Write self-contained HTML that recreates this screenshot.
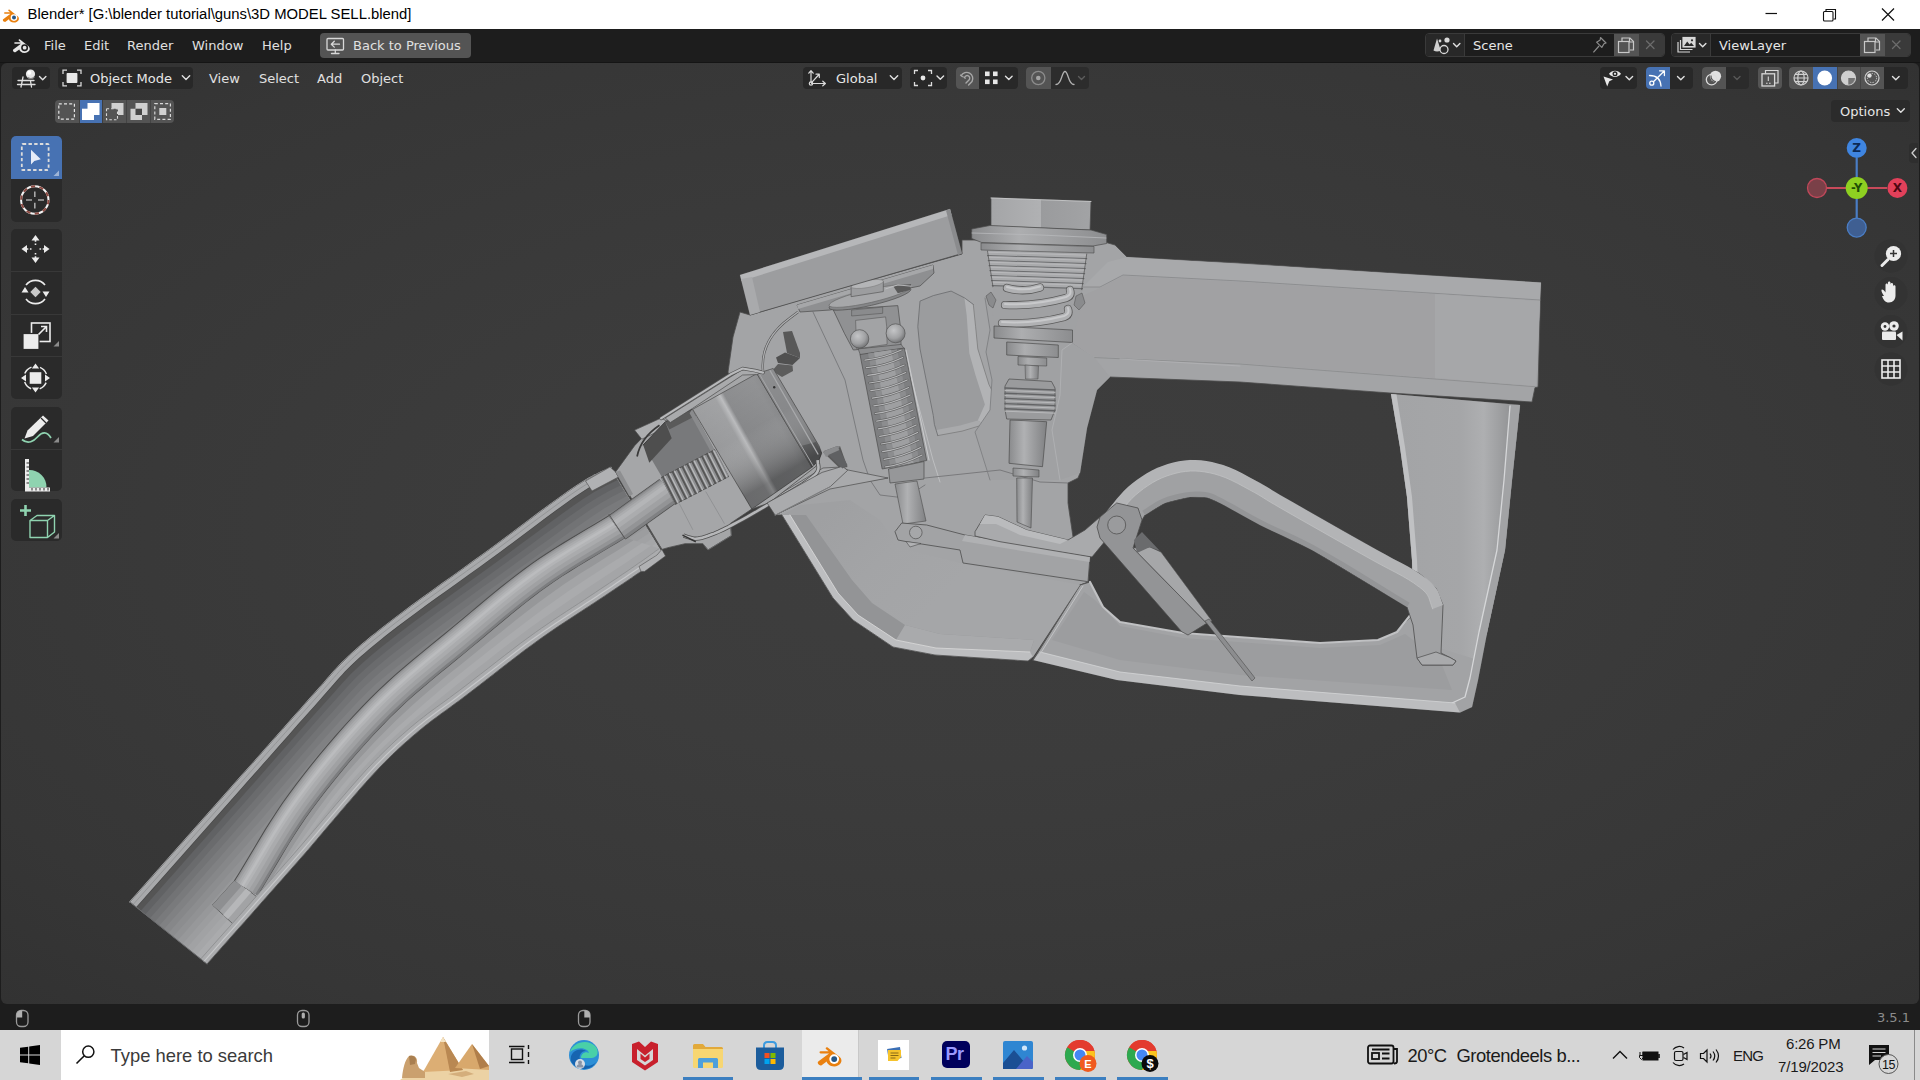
<!DOCTYPE html>
<html lang="en">
<head>
<meta charset="utf-8">
<title>Blender</title>
<style>
*{box-sizing:border-box;margin:0;padding:0}
html,body{width:1920px;height:1080px;overflow:hidden;background:#1d1d1d}
body{position:relative;font-family:"DejaVu Sans","Liberation Sans",sans-serif;font-size:13px;color:#e6e6e6}
.abs{position:absolute}
.t{position:absolute;white-space:nowrap;line-height:1}
#titlebar{position:absolute;left:0;top:0;width:1920px;height:29px;background:#fff;color:#000;font-family:"Liberation Sans",sans-serif}
#topbar{position:absolute;left:0;top:29px;width:1920px;height:33px;background:#1d1d1d}
#tbline{position:absolute;left:0;top:61.500px;width:1920px;height:1.500px;background:#151515}
#viewport{position:absolute;left:1px;top:63px;width:1918px;height:941px;border-radius:6px;overflow:hidden;
 background:radial-gradient(ellipse farthest-corner at 50% 50%, #3e3e3e 0%, #3c3c3c 35%, #393939 60%, #363636 82%, #323232 100%)}
#statusbar{position:absolute;left:0;top:1005px;width:1920px;height:25px;background:#1d1d1d}
#taskbar{position:absolute;left:0;top:1030px;width:1920px;height:50px;background:#d6d6d6;font-family:"Liberation Sans",sans-serif;color:#000}
.btn{position:absolute;background:#282828;border-radius:4px}
.btn2{position:absolute;background:#545454}
.blue{background:#4772b3}
.menu{color:#e0e0e0}
svg{position:absolute;overflow:visible}
</style>
</head>
<body>
<div id="titlebar">
  <svg style="left:1px;top:8px" width="21" height="15" viewBox="0 0 21 15">
    <path d="M2.200 11.300L9.500 5.800H3.800C2.800 5.800 2.800 4.300 3.800 4.300H9.200L7.600 3C6.700 2.200 7.700 1.100 8.600 1.800L16.800 8.200C19.600 11 16.800 14.600 13 14.600 10 14.600 8.300 12.900 7.900 11.300L4.500 13.800C3.200 14.700 1 12.200 2.200 11.300Z" fill="#e9800f"/>
    <circle cx="13" cy="9.600" r="3.300" fill="#fff"/><circle cx="13" cy="9.600" r="2" fill="#265787"/>
  </svg>
  <div class="t" style="left:27.500px;top:7.300px;font-size:14.850px">Blender* [G:\blender tutorial\guns\3D MODEL SELL.blend]</div>
  <svg style="left:1750px;top:0" width="170" height="29" viewBox="1750 0 170 29">
    <path d="M1765.500 13.500H1777" stroke="#111" stroke-width="1.200"/>
    <path d="M1826 11.500V9.500H1835.500V19H1833.500" stroke="#111" stroke-width="1.100" fill="none"/><rect x="1823.500" y="11.500" width="9.500" height="9.500" rx="1" fill="none" stroke="#111" stroke-width="1.100"/>
    <path d="M1882 8.500L1894 20.500M1894 8.500L1882 20.500" stroke="#111" stroke-width="1.200"/>
  </svg>
</div>
<div id="topbar">
  <svg style="left:11px;top:7px" width="22" height="19" viewBox="0 0 21 15">
    <path d="M2.200 11.300L9.500 5.800H3.800C2.800 5.800 2.800 4.300 3.800 4.300H9.200L7.600 3C6.700 2.200 7.700 1.100 8.600 1.800L16.800 8.200C19.600 11 16.800 14.600 13 14.600 10 14.600 8.300 12.900 7.900 11.300L4.500 13.800C3.200 14.700 1 12.200 2.200 11.300Z" fill="#e6e6e6"/>
    <circle cx="13" cy="9.600" r="3.300" fill="#1d1d1d"/><circle cx="13" cy="9.600" r="1.800" fill="#e6e6e6"/>
  </svg>
  <div class="t menu" style="left:44px;top:9.500px">File</div>
  <div class="t menu" style="left:84px;top:9.500px">Edit</div>
  <div class="t menu" style="left:127px;top:9.500px">Render</div>
  <div class="t menu" style="left:192px;top:9.500px">Window</div>
  <div class="t menu" style="left:262px;top:9.500px">Help</div>
  <div class="btn2" style="left:320px;top:4px;width:151px;height:25px;border-radius:4px"></div>
  <svg style="left:326px;top:8px" width="19" height="18" viewBox="0 0 19 18"><g stroke="#d8d8d8" stroke-width="1.300" fill="none" stroke-linecap="round" stroke-linejoin="round"><rect x="1" y="1.500" width="16.500" height="11.500" rx="1"/><path d="M9.300 13V16M5.500 16.500H13M13.500 7.200H5.500M8.300 4.300L5.300 7.200 8.300 10.100"/></g></svg>
  <div class="t menu" style="left:353px;top:9.500px">Back to Previous</div>
</div>
<div id="tbline"></div>
<div id="viewport"></div>
<div id="statusbar">
  <div class="t" style="right:10px;top:6px;color:#8c8c8c">3.5.1</div>
</div>
<svg id="model" width="1920" height="1080" viewBox="0 0 1920 1080" style="left:0;top:0">
<defs>
<linearGradient id="gTubeIn" gradientUnits="userSpaceOnUse" x1="300" y1="700" x2="345" y2="745"><stop offset="0" stop-color="#4f4f4f"/><stop offset="1" stop-color="#8c8d8f"/></linearGradient>
<linearGradient id="gGrip" gradientUnits="userSpaceOnUse" x1="1395" y1="0" x2="1515" y2="0"><stop offset="0" stop-color="#a3a4a6"/><stop offset="0.55" stop-color="#a5a6a8"/><stop offset="0.74" stop-color="#aeafb1"/><stop offset="0.84" stop-color="#a2a3a5"/><stop offset="1" stop-color="#8e8f91"/></linearGradient>
<linearGradient id="gCyl" gradientUnits="userSpaceOnUse" x1="693" y1="409" x2="790" y2="355"><stop offset="0" stop-color="#969799"/><stop offset="0.22" stop-color="#9b9c9e"/><stop offset="0.27" stop-color="#b8b9bb"/><stop offset="0.31" stop-color="#848587"/><stop offset="0.6" stop-color="#8a8b8d"/><stop offset="0.75" stop-color="#808183"/><stop offset="1" stop-color="#78797b"/></linearGradient>
<linearGradient id="gCylV" gradientUnits="userSpaceOnUse" x1="740" y1="385" x2="790" y2="470"><stop offset="0" stop-color="#fff" stop-opacity="0.07"/><stop offset="0.45" stop-color="#fff" stop-opacity="0.02"/><stop offset="1" stop-color="#000" stop-opacity="0.30"/></linearGradient>
<linearGradient id="gBowl" gradientUnits="userSpaceOnUse" x1="800" y1="540" x2="900" y2="640"><stop offset="0" stop-color="#9fa0a2"/><stop offset="0.5" stop-color="#a3a4a6"/><stop offset="1" stop-color="#a5a6a8"/></linearGradient>
<linearGradient id="gRodV" gradientUnits="objectBoundingBox" x1="0" y1="0" x2="1" y2="0"><stop offset="0" stop-color="#8a8b8d"/><stop offset="0.4" stop-color="#b0b1b3"/><stop offset="1" stop-color="#808183"/></linearGradient>
<linearGradient id="gHex" gradientUnits="objectBoundingBox" x1="0" y1="0" x2="1" y2="0"><stop offset="0" stop-color="#a4a5a7"/><stop offset="0.5" stop-color="#b0b1b3"/><stop offset="0.505" stop-color="#9a9b9d"/><stop offset="1" stop-color="#a2a3a5"/></linearGradient>
<linearGradient id="gFl" gradientUnits="objectBoundingBox" x1="0" y1="0" x2="1" y2="0"><stop offset="0" stop-color="#8a8b8d"/><stop offset="0.35" stop-color="#adaeb0"/><stop offset="1" stop-color="#8c8d8f"/></linearGradient>
<radialGradient id="gBall" cx="0.4" cy="0.35" r="0.7"><stop offset="0" stop-color="#c4c5c7"/><stop offset="0.6" stop-color="#a0a1a3"/><stop offset="1" stop-color="#6e6f71"/></radialGradient>
</defs>
<polygon points="750.0,315.0 740.0,312.0 733.0,337.0 728.0,372.0 740.0,420.0 768.0,500.0 775.0,515.0 782.0,515.0 833.0,598.0 853.0,620.0 893.0,647.0 935.0,655.0 1028.0,661.0 1033.0,657.0 1080.0,585.0 1088.0,582.0 1090.0,557.0 1073.0,537.0 1068.0,503.0 1068.0,483.0 1078.0,478.0 1080.0,473.0 1087.0,428.0 1097.0,390.0 1110.0,377.0 1240.0,382.0 1390.0,393.0 1532.0,402.0 1535.0,387.5 1538.0,387.0 1541.0,282.5 1240.0,263.0 1127.0,257.0 1115.0,245.0 1108.0,243.0 1090.0,236.0 985.0,240.0 962.0,240.0 962.0,254.0 800.0,300.0" fill="#a3a4a6" stroke="#4c4c4c" stroke-width="0.8" stroke-linejoin="round" />
<polygon points="1127.0,257.0 1541.0,282.5 1540.0,300.0 1240.0,281.0 1123.0,275.0 1100.0,287.0 1083.0,287.0 1108.0,262.0" fill="#a8a9ab" />
<polyline points="1083.0,287.0 1100.0,287.0 1123.0,275.0 1240.0,281.0 1540.0,300.0" fill="none" stroke="#8a8b8d" stroke-width="0.9" stroke-linecap="round" stroke-linejoin="round" />
<polyline points="1072.0,343.0 1093.0,357.5 1240.0,364.0 1535.0,386.7" fill="none" stroke="#8c8d8f" stroke-width="0.9" stroke-linecap="round" stroke-linejoin="round" />
<polyline points="1120.0,359.0 1240.0,366.0" fill="none" stroke="#b4b5b7" stroke-width="0.7" stroke-linecap="round" stroke-linejoin="round" />
<polygon points="1123.0,276.0 1240.0,282.0 1540.0,301.0 1536.0,386.0 1240.0,363.0 1094.0,356.5 1073.0,343.0 1073.0,300.0 1100.0,288.0" fill="#a1a1a3" />
<polygon points="1435.0,294.0 1540.0,301.0 1536.0,386.0 1435.0,378.0" fill="#a6a7a9" />
<polygon points="1391.0,394.0 1400.0,447.0 1407.0,497.0 1412.0,560.0 1414.0,613.0 1397.0,632.0 1378.0,640.0 1320.0,643.0 1183.0,633.0 1120.0,622.0 1103.0,607.0 1090.0,582.0 1080.0,585.0 1033.0,660.0 1117.0,680.0 1240.0,695.0 1460.0,712.5 1472.0,707.0 1478.0,680.0 1487.0,633.0 1505.0,550.0 1512.0,480.0 1520.0,405.0 1391.0,394.0" fill="#a2a3a5" stroke="#4c4c4c" stroke-width="0.8" stroke-linejoin="round" />
<polygon points="1391.0,394.0 1400.0,447.0 1407.0,497.0 1412.0,560.0 1414.0,640.0 1478.0,660.0 1487.0,633.0 1505.0,550.0 1512.0,480.0 1520.0,405.0" fill="url(#gGrip)" />
<polygon points="1391.0,394.0 1400.0,447.0 1407.0,497.0 1412.0,560.0 1414.0,613.0 1419.0,613.0 1417.0,560.0 1412.0,497.0 1405.0,447.0 1396.5,394.5" fill="#c0c1c3" />
<polygon points="1510.0,405.0 1520.0,405.0 1512.0,480.0 1505.0,550.0 1487.0,633.0 1478.0,680.0 1472.0,707.0 1460.0,712.5 1455.0,704.0 1465.0,697.0 1470.0,678.0 1479.0,632.0 1497.0,550.0 1504.0,480.0" fill="#a2a3a5" />
<polyline points="1510.0,406.0 1504.0,480.0 1497.0,550.0 1479.0,632.0 1470.0,678.0 1465.0,697.0 1452.0,703.0" fill="none" stroke="#d6d7d9" stroke-width="1.3" stroke-linecap="round" stroke-linejoin="round" />
<polygon points="1033.0,660.0 1117.0,680.0 1240.0,695.0 1460.0,712.5 1455.0,703.0 1240.0,686.0 1120.0,672.0 1040.0,652.0" fill="#bcbdbf" />
<polyline points="1040.0,652.0 1120.0,672.0 1240.0,686.0 1455.0,703.0" fill="none" stroke="#d4d5d7" stroke-width="0.8" stroke-linecap="round" stroke-linejoin="round" />
<polyline points="1090.0,582.0 1103.0,607.0 1120.0,622.0 1183.0,633.0 1320.0,643.0 1378.0,640.0 1397.0,632.0 1412.0,613.0" fill="none" stroke="#c0c1c3" stroke-width="2.2" stroke-linecap="round" stroke-linejoin="round" />
<polygon points="1095.0,600.0 1120.0,626.0 1183.0,638.0 1320.0,648.0 1380.0,645.0 1405.0,634.0 1440.0,660.0 1452.0,690.0 1240.0,675.0 1120.0,660.0 1052.0,640.0 1084.0,592.0" fill="#9c9d9f" />
<polyline points="1080.0,585.0 1033.0,660.0" fill="none" stroke="#5a5a5a" stroke-width="1.2" stroke-linecap="round" stroke-linejoin="round" />
<polyline points="1083.0,586.0 1037.0,659.0" fill="none" stroke="#c2c3c5" stroke-width="1.0" stroke-linecap="round" stroke-linejoin="round" />
<polygon points="920.0,301.1 933.3,295.6 951.1,291.1 964.4,297.8 973.3,304.4 975.6,326.7 977.8,348.9 988.9,384.4 997.8,402.2 993.3,415.6 984.4,424.4 962.2,431.1 937.8,435.6 934.4,424.4 933.3,415.6 924.4,371.1 920.0,348.9 917.8,326.7" fill="#9b9c9e" />
<polygon points="964.4,297.8 973.3,304.4 975.6,326.7 977.8,348.9 988.9,384.4 997.8,402.2 993.3,415.6 984.4,424.4 977.8,420.4 984.9,404.4 975.6,375.6 969.3,353.3 966.7,315.6" fill="#b2b3b5" />
<polygon points="937.8,435.6 962.2,431.1 984.4,424.4 977.8,420.4 960.0,425.6 936.0,430.0" fill="#a9aaac" />
<polyline points="937.8,435.6 934.4,424.4 933.3,415.6 924.4,371.1 920.0,348.9 917.8,326.7 920.0,301.1 933.3,295.6 951.1,291.1 964.4,297.8 973.3,304.4" fill="none" stroke="#6a6b6d" stroke-width="0.8" stroke-linecap="round" stroke-linejoin="round" />
<polyline points="973.3,304.4 975.6,326.7 977.8,348.9 988.9,384.4 997.8,402.2 993.3,415.6 984.4,424.4 962.2,431.1 937.8,435.6" fill="none" stroke="#777" stroke-width="0.7" stroke-linecap="round" stroke-linejoin="round" />
<polygon points="985.0,298.0 1000.0,290.0 1083.0,287.0 1072.0,343.0 1094.0,357.0 1110.0,377.0 1097.0,390.0 1087.0,428.0 1080.0,473.0 1060.0,480.0 990.0,480.0 975.0,432.0 990.0,410.0 992.0,380.0 986.0,352.0 990.0,330.0" fill="#a0a1a3" />
<polygon points="782.0,515.0 833.0,598.0 853.0,620.0 893.0,647.0 935.0,655.0 1028.0,661.0 1033.0,657.0 1080.0,585.0 1000.0,570.0 960.0,563.0 900.0,548.0 880.0,520.0 850.0,500.0 800.0,505.0" fill="url(#gBowl)" />
<polygon points="790.0,515.0 838.0,593.0 858.0,615.0 896.0,640.0 936.0,648.0 1030.0,652.0 1034.0,640.0 940.0,634.0 905.0,625.0 872.0,603.0 852.0,580.0 806.0,515.0" fill="#939496" />
<polygon points="905.0,625.0 940.0,634.0 1034.0,640.0 1030.0,652.0 936.0,648.0 896.0,640.0" fill="#a9aaac" />
<polygon points="782.0,515.0 833.0,598.0 853.0,620.0 893.0,647.0 935.0,655.0 1028.0,661.0 1033.0,657.0 1030.0,652.0 936.0,648.0 896.0,640.0 858.0,615.0 838.0,593.0 790.0,515.0" fill="#bdbec0" />
<polyline points="790.0,515.0 838.0,593.0 858.0,615.0 896.0,640.0 936.0,648.0 1030.0,652.0" fill="none" stroke="#dadada" stroke-width="0.8" stroke-linecap="round" stroke-linejoin="round" />
<polyline points="782.0,515.0 833.0,598.0 853.0,620.0 893.0,647.0 935.0,655.0 1028.0,661.0 1033.0,657.0" fill="none" stroke="#4c4c4c" stroke-width="0.8" stroke-linecap="round" stroke-linejoin="round" />
<polyline points="813.0,312.0 845.0,380.0 863.0,460.0 870.0,480.0" fill="none" stroke="#707173" stroke-width="0.8" stroke-linecap="round" stroke-linejoin="round" />
<polyline points="905.0,355.0 933.0,460.0 940.0,482.0" fill="none" stroke="#c0c1c3" stroke-width="0.9" stroke-linecap="round" stroke-linejoin="round" />
<polyline points="775.0,515.0 830.0,487.0 888.0,478.0" fill="none" stroke="#6e6f71" stroke-width="0.8" stroke-linecap="round" stroke-linejoin="round" />
<polyline points="870.0,480.0 880.0,495.0 905.0,498.0 925.0,485.0" fill="none" stroke="#6e6f71" stroke-width="0.8" stroke-linecap="round" stroke-linejoin="round" />
<polyline points="925.0,478.0 1000.0,470.0 1040.0,482.0 1068.0,483.0" fill="none" stroke="#6e6f71" stroke-width="0.8" stroke-linecap="round" stroke-linejoin="round" />
<polygon points="768.0,501.0 823.0,468.0 841.0,467.0 848.0,470.0 888.0,478.0 830.0,489.0 775.0,515.0" fill="#a9aaac" stroke="#4c4c4c" stroke-width="0.7" stroke-linejoin="round" />
<polygon points="783.0,332.0 792.0,331.0 800.0,353.0 800.0,358.0 787.0,353.0" fill="#585858" />
<polygon points="776.0,357.5 785.0,352.5 800.0,358.0 792.5,365.0 778.0,363.0" fill="#505050" />
<polygon points="772.0,371.0 778.0,364.0 792.5,365.5 793.0,371.0 782.0,377.0" fill="#5c5c5c" />
<polygon points="823.0,452.0 840.0,446.0 847.5,467.0 840.0,468.5" fill="#5a5a5a" />
<polygon points="823.0,452.0 840.0,446.0 838.0,450.0 826.0,457.0" fill="#8a8b8d" />
<polygon points="797.0,305.0 933.0,265.0 934.0,273.0 920.0,286.0 905.0,289.0 880.0,300.0 830.0,310.0 800.0,312.0" fill="#8e8f91" stroke="#4c4c4c" stroke-width="0.7" stroke-linejoin="round" />
<polygon points="797.0,305.0 933.0,265.0 933.0,269.0 798.0,309.0" fill="#a6a7a9" />
<polygon points="833.3,310.0 897.8,305.6 900.4,326.7 901.1,345.6 853.3,350.0 844.4,333.3" fill="#909193" stroke="#4c4c4c" stroke-width="0.7" stroke-linejoin="round" />
<polygon points="855.6,320.4 885.6,316.9 886.7,326.7 887.1,344.4 856.7,348.9" fill="#a2a3a5" stroke="#4c4c4c" stroke-width="0.5" stroke-linejoin="round" />
<polygon points="851.6,310.0 882.7,307.1 882.7,313.3 851.6,316.0" fill="#8a8b8d" stroke="#4c4c4c" stroke-width="0.5" stroke-linejoin="round" />
<ellipse cx="870" cy="298.500" rx="42" ry="7" transform="rotate(-13 870 298.500)" fill="#858688" stroke="#555" stroke-width="0.700"/>
<ellipse cx="870" cy="296" rx="42" ry="6.500" transform="rotate(-13 870 296)" fill="#a6a7a9" stroke="#666" stroke-width="0.600"/>
<polygon points="851.1,286.7 883.3,281.1 883.3,291.6 851.1,296.7" fill="#9c9d9f" stroke="#4c4c4c" stroke-width="0.6" stroke-linejoin="round" />
<ellipse cx="867.300" cy="284" rx="16.300" ry="3.600" transform="rotate(-10 867.300 284)" fill="#b4b5b7" stroke="#777" stroke-width="0.500"/>
<polygon points="893.3,286.2 911.1,284.0 910.0,290.0 897.8,293.3" fill="#5a5a5a" />
<polyline points="885.6,288.9 897.8,284.9 911.1,286.2" fill="none" stroke="#c0c1c3" stroke-width="0.9" stroke-linecap="round" stroke-linejoin="round" />
<circle cx="859.6" cy="338.9" r="9.2" fill="url(#gBall)" stroke="#555" stroke-width="0.7"/>
<circle cx="895.6" cy="333.3" r="9.5" fill="url(#gBall)" stroke="#555" stroke-width="0.7"/>
<polygon points="858.2,348.9 901.1,344.4 904.0,348.4 860.4,355.1" fill="#8c8d8f" stroke="#4c4c4c" stroke-width="0.6" stroke-linejoin="round" />
<polygon points="860.0,354.5 904.4,348.0 926.7,460.5 882.2,469.0" fill="#7e7f81" stroke="#4c4c4c" stroke-width="0.7" stroke-linejoin="round" />
<polygon points="868.0,353.5 897.0,349.3 919.5,461.5 890.5,467.5" fill="#8c8d8f" />
<polygon points="874.0,352.5 891.0,350.0 913.5,462.8 896.5,466.3" fill="#9e9fa1" />
<path d="M864.9 360.1 Q883.1 358.4 901.3 350.0" fill="none" stroke="#5e5e5e" stroke-width="2.4" stroke-linecap="round"/>
<path d="M864.9 360.1 Q883.1 358.4 901.3 350.0" fill="none" stroke="#b6b7b9" stroke-width="1.2" stroke-linecap="round"/>
<path d="M866.4 367.7 Q884.6 366.0 902.8 357.5" fill="none" stroke="#5e5e5e" stroke-width="2.4" stroke-linecap="round"/>
<path d="M866.4 367.7 Q884.6 366.0 902.8 357.5" fill="none" stroke="#b6b7b9" stroke-width="1.2" stroke-linecap="round"/>
<path d="M867.8 375.3 Q886.1 373.5 904.3 365.0" fill="none" stroke="#5e5e5e" stroke-width="2.4" stroke-linecap="round"/>
<path d="M867.8 375.3 Q886.1 373.5 904.3 365.0" fill="none" stroke="#b6b7b9" stroke-width="1.2" stroke-linecap="round"/>
<path d="M869.3 383.0 Q887.5 381.1 905.8 372.5" fill="none" stroke="#5e5e5e" stroke-width="2.4" stroke-linecap="round"/>
<path d="M869.3 383.0 Q887.5 381.1 905.8 372.5" fill="none" stroke="#b6b7b9" stroke-width="1.2" stroke-linecap="round"/>
<path d="M870.8 390.6 Q889.0 388.7 907.2 380.0" fill="none" stroke="#5e5e5e" stroke-width="2.4" stroke-linecap="round"/>
<path d="M870.8 390.6 Q889.0 388.7 907.2 380.0" fill="none" stroke="#b6b7b9" stroke-width="1.2" stroke-linecap="round"/>
<path d="M872.3 398.2 Q890.5 396.2 908.7 387.5" fill="none" stroke="#5e5e5e" stroke-width="2.4" stroke-linecap="round"/>
<path d="M872.3 398.2 Q890.5 396.2 908.7 387.5" fill="none" stroke="#b6b7b9" stroke-width="1.2" stroke-linecap="round"/>
<path d="M873.8 405.9 Q892.0 403.8 910.2 395.0" fill="none" stroke="#5e5e5e" stroke-width="2.4" stroke-linecap="round"/>
<path d="M873.8 405.9 Q892.0 403.8 910.2 395.0" fill="none" stroke="#b6b7b9" stroke-width="1.2" stroke-linecap="round"/>
<path d="M875.2 413.5 Q893.5 411.4 911.7 402.5" fill="none" stroke="#5e5e5e" stroke-width="2.4" stroke-linecap="round"/>
<path d="M875.2 413.5 Q893.5 411.4 911.7 402.5" fill="none" stroke="#b6b7b9" stroke-width="1.2" stroke-linecap="round"/>
<path d="M876.7 421.1 Q895.0 418.9 913.2 410.0" fill="none" stroke="#5e5e5e" stroke-width="2.4" stroke-linecap="round"/>
<path d="M876.7 421.1 Q895.0 418.9 913.2 410.0" fill="none" stroke="#b6b7b9" stroke-width="1.2" stroke-linecap="round"/>
<path d="M878.2 428.8 Q896.4 426.5 914.7 417.5" fill="none" stroke="#5e5e5e" stroke-width="2.4" stroke-linecap="round"/>
<path d="M878.2 428.8 Q896.4 426.5 914.7 417.5" fill="none" stroke="#b6b7b9" stroke-width="1.2" stroke-linecap="round"/>
<path d="M879.7 436.4 Q897.9 434.1 916.2 425.0" fill="none" stroke="#5e5e5e" stroke-width="2.4" stroke-linecap="round"/>
<path d="M879.7 436.4 Q897.9 434.1 916.2 425.0" fill="none" stroke="#b6b7b9" stroke-width="1.2" stroke-linecap="round"/>
<path d="M881.2 444.0 Q899.4 441.6 917.6 432.5" fill="none" stroke="#5e5e5e" stroke-width="2.4" stroke-linecap="round"/>
<path d="M881.2 444.0 Q899.4 441.6 917.6 432.5" fill="none" stroke="#b6b7b9" stroke-width="1.2" stroke-linecap="round"/>
<path d="M882.6 451.7 Q900.9 449.2 919.1 440.0" fill="none" stroke="#5e5e5e" stroke-width="2.4" stroke-linecap="round"/>
<path d="M882.6 451.7 Q900.9 449.2 919.1 440.0" fill="none" stroke="#b6b7b9" stroke-width="1.2" stroke-linecap="round"/>
<path d="M884.1 459.3 Q902.4 456.8 920.6 447.5" fill="none" stroke="#5e5e5e" stroke-width="2.4" stroke-linecap="round"/>
<path d="M884.1 459.3 Q902.4 456.8 920.6 447.5" fill="none" stroke="#b6b7b9" stroke-width="1.2" stroke-linecap="round"/>
<path d="M885.6 466.9 Q903.9 464.3 922.1 455.0" fill="none" stroke="#5e5e5e" stroke-width="2.4" stroke-linecap="round"/>
<path d="M885.6 466.9 Q903.9 464.3 922.1 455.0" fill="none" stroke="#b6b7b9" stroke-width="1.2" stroke-linecap="round"/>
<polyline points="906.0,350.0 929.0,460.0" fill="none" stroke="#cacbcd" stroke-width="1.1" stroke-linecap="round" stroke-linejoin="round" />
<polygon points="888.5,469.0 924.0,461.5 924.0,479.0 890.0,483.0" fill="#969799" stroke="#4c4c4c" stroke-width="0.7" stroke-linejoin="round" />
<polygon points="895.0,484.0 917.0,481.0 926.0,521.0 903.0,524.0" fill="url(#gRodV)" stroke="#4c4c4c" stroke-width="0.6" stroke-linejoin="round" />
<polygon points="991.0,197.5 1091.0,201.0 1090.0,230.0 991.0,226.0" fill="url(#gHex)" stroke="#4c4c4c" stroke-width="0.7" stroke-linejoin="round" />
<polyline points="991.0,198.0 1091.0,201.5" fill="none" stroke="#c8c9cb" stroke-width="0.9" stroke-linecap="round" stroke-linejoin="round" />
<polygon points="971.7,229.0 990.0,225.5 1091.0,230.0 1106.7,234.5 1106.7,243.5 1093.0,246.0 981.7,242.5 971.7,238.5" fill="url(#gFl)" stroke="#4c4c4c" stroke-width="0.7" stroke-linejoin="round" />
<polyline points="972.0,233.0 1040.0,235.0 1106.0,238.0" fill="none" stroke="#b8b9bb" stroke-width="0.8" stroke-linecap="round" stroke-linejoin="round" />
<polygon points="981.0,243.0 1094.0,246.5 1094.0,253.0 981.0,250.0" fill="url(#gFl)" stroke="#4c4c4c" stroke-width="0.6" stroke-linejoin="round" />
<polygon points="987.5,251.0 1086.7,254.0 1086.7,259.0 987.5,256.0" fill="#a9aaac" />
<polyline points="987.5,255.6 1086.7,258.6" fill="none" stroke="#6c6d6f" stroke-width="1.2" stroke-linecap="round" stroke-linejoin="round" />
<polyline points="987.5,252.2 1086.7,255.2" fill="none" stroke="#bcbdbf" stroke-width="0.8" stroke-linecap="round" stroke-linejoin="round" />
<polygon points="988.3,256.0 1086.0,259.0 1086.0,264.0 988.3,261.0" fill="#a9aaac" />
<polyline points="988.3,260.6 1086.0,263.6" fill="none" stroke="#6c6d6f" stroke-width="1.2" stroke-linecap="round" stroke-linejoin="round" />
<polyline points="988.3,257.2 1086.0,260.2" fill="none" stroke="#bcbdbf" stroke-width="0.8" stroke-linecap="round" stroke-linejoin="round" />
<polygon points="989.1,261.0 1085.3,264.0 1085.3,269.0 989.1,266.0" fill="#a9aaac" />
<polyline points="989.1,265.6 1085.3,268.6" fill="none" stroke="#6c6d6f" stroke-width="1.2" stroke-linecap="round" stroke-linejoin="round" />
<polyline points="989.1,262.2 1085.3,265.2" fill="none" stroke="#bcbdbf" stroke-width="0.8" stroke-linecap="round" stroke-linejoin="round" />
<polygon points="989.9,266.0 1084.6,269.0 1084.6,274.0 989.9,271.0" fill="#a9aaac" />
<polyline points="989.9,270.6 1084.6,273.6" fill="none" stroke="#6c6d6f" stroke-width="1.2" stroke-linecap="round" stroke-linejoin="round" />
<polyline points="989.9,267.2 1084.6,270.2" fill="none" stroke="#bcbdbf" stroke-width="0.8" stroke-linecap="round" stroke-linejoin="round" />
<polygon points="990.7,271.0 1083.9,274.0 1083.9,279.0 990.7,276.0" fill="#a9aaac" />
<polyline points="990.7,275.6 1083.9,278.6" fill="none" stroke="#6c6d6f" stroke-width="1.2" stroke-linecap="round" stroke-linejoin="round" />
<polyline points="990.7,272.2 1083.9,275.2" fill="none" stroke="#bcbdbf" stroke-width="0.8" stroke-linecap="round" stroke-linejoin="round" />
<polygon points="991.5,276.0 1083.2,279.0 1083.2,284.0 991.5,281.0" fill="#a9aaac" />
<polyline points="991.5,280.6 1083.2,283.6" fill="none" stroke="#6c6d6f" stroke-width="1.2" stroke-linecap="round" stroke-linejoin="round" />
<polyline points="991.5,277.2 1083.2,280.2" fill="none" stroke="#bcbdbf" stroke-width="0.8" stroke-linecap="round" stroke-linejoin="round" />
<polygon points="992.3,281.0 1082.5,284.0 1082.5,289.0 992.3,286.0" fill="#a9aaac" />
<polyline points="992.3,285.6 1082.5,288.6" fill="none" stroke="#6c6d6f" stroke-width="1.2" stroke-linecap="round" stroke-linejoin="round" />
<polyline points="992.3,282.2 1082.5,285.2" fill="none" stroke="#bcbdbf" stroke-width="0.8" stroke-linecap="round" stroke-linejoin="round" />
<polyline points="987.5,251.0 993.0,287.0" fill="none" stroke="#4c4c4c" stroke-width="0.7" stroke-linecap="round" stroke-linejoin="round" />
<polyline points="1086.7,254.0 1081.7,290.0" fill="none" stroke="#4c4c4c" stroke-width="0.7" stroke-linecap="round" stroke-linejoin="round" />
<polygon points="993.0,287.0 1081.7,290.0 1083.0,300.0 1075.0,330.0 994.0,326.0 992.0,305.0" fill="#a0a1a3" />
<polygon points="986.0,296.0 991.0,292.0 996.0,300.0 993.0,308.0 989.0,305.0" fill="#8a8b8d" stroke="#4c4c4c" stroke-width="0.5" stroke-linejoin="round" />
<polygon points="1076.0,296.0 1082.0,293.0 1085.0,303.0 1079.0,310.0 1074.0,305.0" fill="#8a8b8d" stroke="#4c4c4c" stroke-width="0.5" stroke-linejoin="round" />
<path d="M1007.0 288.0 Q1023.5 292.8 1040.0 287.5" fill="none" stroke="#5c5c5c" stroke-width="8.200" stroke-linecap="round"/>
<path d="M1007.0 288.0 Q1023.5 292.8 1040.0 287.5" fill="none" stroke="#b0b1b3" stroke-width="6.600" stroke-linecap="round"/>
<path d="M1007.0 288.0 Q1023.5 292.8 1040.0 287.5" fill="none" stroke="#c8c9cb" stroke-width="2" stroke-linecap="round" transform="translate(0,-1)"/>
<path d="M1005.0 305.0 Q1035.5 306.5 1066.0 298.0 q6 -2 4 -8" fill="none" stroke="#5c5c5c" stroke-width="8.200" stroke-linecap="round"/>
<path d="M1005.0 305.0 Q1035.5 306.5 1066.0 298.0 q6 -2 4 -8" fill="none" stroke="#b0b1b3" stroke-width="6.600" stroke-linecap="round"/>
<path d="M1005.0 305.0 Q1035.5 306.5 1066.0 298.0 q6 -2 4 -8" fill="none" stroke="#c8c9cb" stroke-width="2" stroke-linecap="round" transform="translate(0,-1)"/>
<path d="M1002.0 323.0 Q1033.0 325.0 1064.0 317.0 q6 -2 4 -8" fill="none" stroke="#5c5c5c" stroke-width="8.200" stroke-linecap="round"/>
<path d="M1002.0 323.0 Q1033.0 325.0 1064.0 317.0 q6 -2 4 -8" fill="none" stroke="#b0b1b3" stroke-width="6.600" stroke-linecap="round"/>
<path d="M1002.0 323.0 Q1033.0 325.0 1064.0 317.0 q6 -2 4 -8" fill="none" stroke="#c8c9cb" stroke-width="2" stroke-linecap="round" transform="translate(0,-1)"/>
<polygon points="994.0,326.0 1072.5,330.0 1072.5,342.5 994.0,338.0" fill="url(#gFl)" stroke="#4c4c4c" stroke-width="0.7" stroke-linejoin="round" />
<polygon points="1006.7,342.0 1058.3,345.0 1058.3,357.5 1006.7,355.0" fill="url(#gFl)" stroke="#4c4c4c" stroke-width="0.7" stroke-linejoin="round" />
<polygon points="1018.0,356.5 1046.7,358.0 1046.7,366.0 1018.0,365.0" fill="url(#gFl)" stroke="#4c4c4c" stroke-width="0.6" stroke-linejoin="round" />
<polygon points="1025.0,365.0 1038.5,366.0 1038.0,379.0 1025.5,379.0" fill="url(#gRodV)" stroke="#4c4c4c" stroke-width="0.5" stroke-linejoin="round" />
<polygon points="1009.0,379.0 1051.5,381.5 1055.0,388.0 1055.0,410.0 1051.0,420.0 1006.7,419.0 1005.0,410.0 1005.0,386.0" fill="#9a9b9d" stroke="#4c4c4c" stroke-width="0.7" stroke-linejoin="round" />
<polyline points="1005.0,388.0 1055.0,390.0" fill="none" stroke="#626365" stroke-width="1.4" stroke-linecap="round" stroke-linejoin="round" />
<polyline points="1005.0,390.4 1055.0,392.4" fill="none" stroke="#b8b9bb" stroke-width="1.0" stroke-linecap="round" stroke-linejoin="round" />
<polyline points="1005.0,393.2 1055.0,395.2" fill="none" stroke="#626365" stroke-width="1.4" stroke-linecap="round" stroke-linejoin="round" />
<polyline points="1005.0,395.6 1055.0,397.6" fill="none" stroke="#b8b9bb" stroke-width="1.0" stroke-linecap="round" stroke-linejoin="round" />
<polyline points="1005.0,398.4 1055.0,400.4" fill="none" stroke="#626365" stroke-width="1.4" stroke-linecap="round" stroke-linejoin="round" />
<polyline points="1005.0,400.8 1055.0,402.8" fill="none" stroke="#b8b9bb" stroke-width="1.0" stroke-linecap="round" stroke-linejoin="round" />
<polyline points="1005.0,403.6 1055.0,405.6" fill="none" stroke="#626365" stroke-width="1.4" stroke-linecap="round" stroke-linejoin="round" />
<polyline points="1005.0,406.0 1055.0,408.0" fill="none" stroke="#b8b9bb" stroke-width="1.0" stroke-linecap="round" stroke-linejoin="round" />
<polyline points="1005.0,408.8 1055.0,410.8" fill="none" stroke="#626365" stroke-width="1.4" stroke-linecap="round" stroke-linejoin="round" />
<polyline points="1005.0,411.2 1055.0,413.2" fill="none" stroke="#b8b9bb" stroke-width="1.0" stroke-linecap="round" stroke-linejoin="round" />
<polygon points="1010.0,420.0 1046.7,421.7 1042.5,466.7 1009.0,463.3" fill="url(#gRodV)" stroke="#4c4c4c" stroke-width="0.7" stroke-linejoin="round" />
<polygon points="1013.0,468.0 1039.0,470.0 1039.0,477.0 1013.0,476.0" fill="url(#gRodV)" stroke="#4c4c4c" stroke-width="0.6" stroke-linejoin="round" />
<polygon points="1016.7,478.0 1032.5,478.0 1031.0,528.0 1017.0,522.0" fill="url(#gRodV)" stroke="#4c4c4c" stroke-width="0.6" stroke-linejoin="round" />
<polyline points="990.0,480.0 975.0,432.0 990.0,410.0 992.0,380.0 986.0,352.0 990.0,330.0 985.0,298.0" fill="none" stroke="#7a7b7d" stroke-width="0.8" stroke-linecap="round" stroke-linejoin="round" />
<polyline points="1072.0,343.0 1062.0,350.0 1060.0,395.0 1052.0,430.0 1060.0,480.0" fill="none" stroke="#b0b1b3" stroke-width="0.9" stroke-linecap="round" stroke-linejoin="round" />
<polygon points="740.0,275.0 950.0,209.0 962.0,253.5 750.0,315.0" fill="#9c9d9f" stroke="#4c4c4c" stroke-width="0.8" stroke-linejoin="round" />
<polygon points="740.0,275.0 950.0,209.0 951.5,215.0 741.5,281.0" fill="#b6b7b9" />
<polygon points="946.0,210.5 950.0,209.0 962.0,253.5 958.0,255.0" fill="#8a8b8d" />
<polygon points="741.0,279.0 752.0,277.0 760.0,312.0 750.0,315.0" fill="#a9aaac" />
<polygon points="895.0,531.7 901.7,523.0 926.7,525.0 965.0,535.0 1090.0,556.7 1088.0,581.7 963.0,563.0 960.0,550.0 906.7,541.7 898.0,540.0" fill="#a2a3a5" stroke="#4c4c4c" stroke-width="0.8" stroke-linejoin="round" />
<polygon points="965.0,535.0 1090.0,556.7 1089.5,562.0 962.0,541.0" fill="#b0b1b3" />
<polygon points="906.0,541.5 921.0,543.5 910.0,547.0" fill="#b0b1b3" stroke="#4c4c4c" stroke-width="0.6" stroke-linejoin="round" />
<circle cx="915.8" cy="532.5" r="6.3" fill="#a6a7a9" stroke="#5a5a5a" stroke-width="0.8"/>
<polygon points="975.0,531.7 985.0,515.0 998.0,516.7 1026.7,530.0 1068.0,540.0 1085.0,530.0 1100.0,517.0 1106.0,540.0 1092.0,557.0 1000.0,541.7 975.0,536.0" fill="#a9aaac" stroke="#4c4c4c" stroke-width="0.8" stroke-linejoin="round" />
<polygon points="980.0,524.0 985.0,515.0 998.0,516.7 1026.7,530.0 1068.0,540.0 1060.0,544.0 1020.0,535.0 996.0,524.0" fill="#babbbd" />
<polygon points="1106.0,512.0 1128.0,487.0 1157.0,468.0 1190.0,460.0 1223.0,465.0 1260.0,483.0 1280.0,495.0 1377.0,550.0 1420.0,574.0 1436.0,588.0 1443.0,605.0 1441.0,653.0 1441.0,653.0 1450.0,657.5 1456.0,661.0 1453.0,665.0 1422.0,665.0 1417.0,658.0 1417.0,658.0 1413.0,625.0 1407.0,607.0 1312.0,550.0 1260.0,525.0 1220.0,503.0 1207.0,497.5 1190.0,497.0 1165.0,503.0 1145.0,515.0 1133.0,535.0 1134.0,549.0 1112.0,545.0 1100.0,530.0" fill="#a0a1a3" stroke="#4c4c4c" stroke-width="0.8" stroke-linejoin="round" />
<polygon points="1106.0,512.0 1109.6,507.8 1113.1,503.4 1116.6,499.1 1120.2,494.9 1124.0,490.8 1128.0,487.0 1132.4,483.3 1137.0,479.8 1141.8,476.4 1146.8,473.3 1151.8,470.5 1157.0,468.0 1162.2,465.9 1167.7,464.1 1173.2,462.5 1178.8,461.3 1184.4,460.5 1190.0,460.0 1195.5,460.0 1201.0,460.3 1206.5,461.0 1212.0,462.1 1217.5,463.4 1223.0,465.0 1229.3,467.3 1235.7,470.1 1242.2,473.3 1248.5,476.7 1254.5,480.0 1260.0,483.0 1263.5,485.0 1266.6,486.8 1269.5,488.6 1272.5,490.4 1275.9,492.5 1280.0,495.0 1292.4,502.1 1308.4,511.2 1326.4,521.5 1344.8,531.9 1362.2,541.7 1377.0,550.0 1385.4,554.6 1393.4,558.9 1401.0,562.8 1408.0,566.6 1414.3,570.3 1420.0,574.0 1423.3,576.4 1426.4,578.6 1429.2,580.8 1431.7,583.1 1434.0,585.4 1436.0,588.0 1437.6,590.6 1438.9,593.4 1440.0,596.3 1440.9,599.2 1441.9,602.1 1443.0,605.0 1432.7,608.9 1431.5,605.8 1430.5,602.7 1429.6,599.9 1428.8,597.6 1427.9,595.8 1427.0,594.3 1425.7,592.7 1424.1,591.0 1422.1,589.2 1419.7,587.3 1416.9,585.3 1413.9,583.1 1408.6,579.7 1402.6,576.2 1395.8,572.5 1388.3,568.6 1380.2,564.3 1371.6,559.6 1356.8,551.3 1339.4,541.5 1320.9,531.0 1302.9,520.8 1286.9,511.7 1274.5,504.5 1270.2,502.0 1266.6,499.8 1263.6,497.9 1260.9,496.2 1258.1,494.5 1254.7,492.6 1249.2,489.6 1243.3,486.4 1237.2,483.1 1231.1,480.1 1225.2,477.5 1219.6,475.5 1214.7,474.0 1209.7,472.8 1204.7,471.9 1199.9,471.3 1195.2,471.0 1190.5,471.0 1185.7,471.4 1180.8,472.1 1175.9,473.2 1170.9,474.6 1166.1,476.2 1161.4,478.1 1156.9,480.2 1152.4,482.7 1147.9,485.6 1143.5,488.6 1139.3,491.9 1135.3,495.2 1131.8,498.5 1128.4,502.2 1125.1,506.1 1121.6,510.4 1118.1,514.8 1114.4,519.1" fill="#b3b4b6" />
<polyline points="1114.4,519.1 1118.1,514.8 1121.6,510.4 1125.1,506.1 1128.4,502.2 1131.8,498.5 1135.3,495.2 1139.3,491.9 1143.5,488.6 1147.9,485.6 1152.4,482.7 1156.9,480.2 1161.4,478.1 1166.1,476.2 1170.9,474.6 1175.9,473.2 1180.8,472.1 1185.7,471.4 1190.5,471.0 1195.2,471.0 1199.9,471.3 1204.7,471.9 1209.7,472.8 1214.7,474.0 1219.6,475.5 1225.2,477.5 1231.1,480.1 1237.2,483.1 1243.3,486.4 1249.2,489.6 1254.7,492.6 1258.1,494.5 1260.9,496.2 1263.6,497.9 1266.6,499.8 1270.2,502.0 1274.5,504.5 1286.9,511.7 1302.9,520.8 1320.9,531.0 1339.4,541.5 1356.8,551.3 1371.6,559.6 1380.2,564.3 1388.3,568.6 1395.8,572.5 1402.6,576.2 1408.6,579.7 1413.9,583.1 1416.9,585.3 1419.7,587.3 1422.1,589.2 1424.1,591.0 1425.7,592.7 1427.0,594.3 1427.9,595.8 1428.8,597.6 1429.6,599.9 1430.5,602.7 1431.5,605.8 1432.7,608.9" fill="none" stroke="#c0c1c3" stroke-width="0.8" stroke-linecap="round" stroke-linejoin="round" />
<polygon points="1407.0,607.0 1390.9,597.2 1374.3,587.0 1357.8,576.9 1341.7,567.1 1326.3,558.0 1312.0,550.0 1302.4,545.0 1293.4,540.7 1284.7,536.6 1276.3,532.8 1268.1,529.0 1260.0,525.0 1252.7,521.1 1245.4,517.1 1238.3,513.0 1231.5,509.2 1225.4,505.8 1220.0,503.0 1217.5,501.7 1215.3,500.6 1213.2,499.6 1211.3,498.8 1209.2,498.1 1207.0,497.5 1204.4,497.0 1201.7,496.7 1198.9,496.6 1196.0,496.6 1193.0,496.7 1190.0,497.0 1186.0,497.5 1181.8,498.2 1177.5,499.1 1173.2,500.2 1169.0,501.5 1165.0,503.0 1161.5,504.6 1158.1,506.5 1154.8,508.6 1151.5,510.8 1148.3,512.9 1145.0,515.0 1142.3,510.8 1145.6,508.7 1148.8,506.6 1152.1,504.4 1155.5,502.2 1159.2,500.2 1163.1,498.4 1167.4,496.8 1171.8,495.4 1176.4,494.3 1180.9,493.3 1185.3,492.6 1189.5,492.0 1192.7,491.7 1195.9,491.6 1199.0,491.6 1202.1,491.7 1205.1,492.1 1208.1,492.6 1210.7,493.3 1213.1,494.1 1215.3,495.1 1217.5,496.2 1219.7,497.3 1222.3,498.5 1227.7,501.4 1234.0,504.8 1240.8,508.7 1247.9,512.7 1255.1,516.7 1262.3,520.5 1270.2,524.5 1278.4,528.3 1286.8,532.1 1295.5,536.1 1304.7,540.6 1314.4,545.6 1328.8,553.7 1344.3,562.8 1360.4,572.6 1377.0,582.8 1393.5,592.9 1409.6,602.7" fill="#949597" />
<polygon points="1436.0,652.0 1450.0,657.5 1456.0,661.0 1453.0,665.0 1422.0,665.0 1417.0,658.0" fill="#a9aaac" stroke="#4c4c4c" stroke-width="0.7" stroke-linejoin="round" />
<polygon points="1100.0,517.0 1116.7,503.0 1138.0,508.0 1142.0,520.0 1133.0,548.0 1206.7,623.3 1188.0,635.0 1181.7,631.7 1100.0,538.0 1097.0,527.0" fill="#939496" stroke="#4c4c4c" stroke-width="0.8" stroke-linejoin="round" />
<polygon points="1133.0,548.0 1150.0,547.0 1161.0,552.0 1212.0,621.0 1206.7,623.3" fill="#a6a7a9" stroke="#4c4c4c" stroke-width="0.6" stroke-linejoin="round" />
<polygon points="1134.0,540.0 1142.0,532.0 1160.0,551.0 1150.0,547.0 1137.0,553.0" fill="#6a6b6d" />
<circle cx="1116.7" cy="525.0" r="9.0" fill="#9a9b9d" stroke="#5a5a5a" stroke-width="0.9"/>
<polygon points="1205.0,621.0 1209.0,619.0 1255.0,678.0 1252.0,681.0" fill="#8c8d8f" stroke="#4e4e4e" stroke-width="0.6" stroke-linejoin="round" />
<polygon points="130.0,902.0 139.3,891.5 148.6,881.0 157.9,870.5 167.2,860.0 176.5,849.5 185.8,839.0 195.1,828.5 204.4,818.0 213.7,807.5 223.0,797.0 232.5,786.2 242.4,775.0 252.6,763.6 262.7,752.1 272.8,740.7 282.6,729.6 292.0,719.0 300.8,709.1 308.8,700.0 316.0,692.0 319.5,688.0 322.7,684.4 325.7,681.0 328.4,677.8 331.1,674.8 333.7,671.8 336.3,668.9 339.0,666.0 341.9,663.1 345.0,660.0 348.6,656.6 352.1,653.3 355.8,650.0 359.4,646.8 363.2,643.6 367.2,640.3 371.3,636.9 375.6,633.5 380.2,629.8 385.0,626.0 393.1,619.7 402.0,613.0 411.6,605.9 421.6,598.6 432.1,591.0 442.7,583.4 453.5,575.7 464.2,568.0 474.8,560.4 485.0,553.0 495.3,545.5 506.0,537.5 517.0,529.3 528.0,521.0 538.9,512.9 549.5,505.0 559.6,497.7 569.0,491.1 577.5,485.3 585.0,480.5 588.2,478.6 591.1,477.0 593.9,475.5 596.5,474.3 598.9,473.1 601.3,472.0 603.7,470.9 606.0,469.9 608.5,468.7 611.0,467.5 664.0,555.0 661.9,556.5 659.9,557.9 657.9,559.4 656.0,560.8 654.0,562.2 652.0,563.7 649.9,565.2 647.7,566.7 645.4,568.3 643.0,570.0 639.4,572.5 635.5,575.1 631.5,577.9 627.3,580.7 622.9,583.7 618.5,586.6 613.9,589.7 609.3,592.8 604.7,595.9 600.0,599.0 594.4,602.7 588.7,606.4 582.9,610.2 577.0,614.1 571.0,618.0 564.9,622.0 558.7,626.1 552.5,630.3 546.3,634.6 540.0,639.0 532.6,644.4 524.9,650.0 517.1,656.0 509.2,662.1 501.2,668.2 493.3,674.4 485.5,680.4 478.0,686.3 470.8,691.8 464.0,697.0 459.1,700.7 454.4,704.1 449.8,707.5 445.4,710.7 441.0,713.8 436.8,717.0 432.5,720.1 428.4,723.3 424.2,726.6 420.0,730.0 415.9,733.4 411.9,736.8 408.1,740.2 404.2,743.6 400.4,747.0 396.6,750.6 392.7,754.3 388.6,758.3 384.4,762.5 380.0,767.0 373.0,774.4 365.7,782.5 358.0,791.2 350.1,800.4 341.9,809.9 333.6,819.7 325.2,829.6 316.8,839.5 308.4,849.4 300.0,859.0 291.0,869.2 281.9,879.6 272.6,890.0 263.3,900.5 254.0,911.1 244.6,921.7 235.1,932.3 225.7,942.9 216.3,953.5 207.0,964.0" fill="#a9aaac" stroke="#4c4c4c" stroke-width="0.8" stroke-linejoin="round" />
<polygon points="136.0,907.3 144.8,897.4 153.6,887.5 162.4,877.5 171.1,867.6 179.9,857.7 188.7,847.8 197.5,837.8 206.3,827.9 215.1,818.0 223.9,808.1 232.7,798.1 241.5,788.2 250.2,778.3 259.0,768.4 267.8,758.4 276.6,748.5 285.4,738.6 294.1,728.6 302.9,718.7 311.7,708.8 320.6,698.9 329.3,689.0 338.0,679.0 347.0,669.2 356.6,660.1 366.5,651.3 376.7,642.8 387.1,634.5 397.6,626.4 408.1,618.4 418.8,610.6 429.5,602.8 440.3,595.0 451.1,587.3 461.8,579.6 472.6,571.8 483.4,564.1 494.1,556.3 504.7,548.4 515.4,540.5 526.0,532.5 536.6,524.6 547.2,516.7 557.9,508.8 568.7,501.1 579.6,493.5 590.7,486.4 602.5,480.3 614.5,474.7 618.6,481.4 606.7,487.2 595.1,493.4 584.0,500.6 573.2,508.1 562.4,515.7 551.8,523.5 541.1,531.3 530.5,539.2 519.9,547.0 509.3,554.9 498.7,562.7 488.0,570.4 477.3,578.1 466.6,585.9 455.9,593.6 445.2,601.3 434.5,609.1 423.8,616.9 413.2,624.7 402.7,632.7 392.2,640.7 381.9,648.9 371.7,657.3 361.8,666.0 352.2,675.1 343.2,684.7 334.4,694.6 325.6,704.4 316.8,714.3 308.1,724.1 299.3,734.0 290.6,743.9 281.8,753.8 273.1,763.7 264.4,773.6 255.7,783.5 246.9,793.4 238.2,803.3 229.5,813.2 220.7,823.1 212.0,833.0 203.2,842.8 194.4,852.7 185.7,862.6 176.9,872.5 168.2,882.4 159.4,892.2 150.7,902.1 141.9,912.0" fill="#555555" />
<polygon points="140.6,911.0 149.4,901.1 158.2,891.2 166.9,881.3 175.7,871.4 184.4,861.5 193.2,851.6 202.0,841.7 210.7,831.9 219.5,822.0 228.2,812.1 237.0,802.2 245.7,792.3 254.5,782.4 263.2,772.5 271.9,762.6 280.7,752.6 289.4,742.7 298.2,732.8 306.9,722.9 315.7,713.1 324.5,703.2 333.3,693.4 342.0,683.5 351.1,673.8 360.6,664.7 370.6,656.0 380.8,647.6 391.1,639.4 401.6,631.3 412.1,623.3 422.7,615.5 433.4,607.7 444.1,599.9 454.8,592.2 465.5,584.5 476.2,576.8 487.0,569.0 497.7,561.3 508.3,553.5 518.9,545.6 529.5,537.7 540.1,529.9 550.8,522.0 561.4,514.2 572.2,506.5 583.1,499.0 594.2,491.9 605.8,485.7 617.7,480.0 621.8,486.7 610.1,492.6 598.6,498.9 587.5,506.0 576.7,513.5 566.0,521.1 555.3,528.9 544.7,536.6 534.1,544.4 523.5,552.2 512.9,559.9 502.2,567.7 491.6,575.4 480.9,583.1 470.3,590.8 459.6,598.5 449.0,606.2 438.3,614.0 427.7,621.8 417.2,629.6 406.7,637.5 396.3,645.6 385.9,653.7 375.7,662.0 365.8,670.7 356.3,679.7 347.2,689.2 338.4,699.0 329.6,708.8 320.8,718.5 312.1,728.4 303.3,738.2 294.6,748.1 285.9,758.0 277.3,767.8 268.6,777.7 259.9,787.6 251.2,797.5 242.5,807.4 233.8,817.2 225.1,827.1 216.4,836.9 207.6,846.8 198.9,856.6 190.2,866.4 181.5,876.3 172.7,886.1 164.0,896.0 155.3,905.8 146.6,915.7" fill="#616264" />
<polygon points="145.3,914.6 154.0,904.8 162.7,894.9 171.5,885.1 180.2,875.2 188.9,865.4 197.7,855.5 206.4,845.7 215.1,835.8 223.9,825.9 232.6,816.1 241.3,806.2 250.0,796.4 258.7,786.5 267.4,776.6 276.1,766.7 284.8,756.8 293.5,746.9 302.2,737.0 310.9,727.2 319.7,717.3 328.5,707.6 337.3,697.8 346.1,688.0 355.1,678.4 364.7,669.4 374.6,660.7 384.8,652.4 395.1,644.2 405.6,636.2 416.1,628.2 426.6,620.4 437.3,612.6 447.9,604.9 458.6,597.1 469.2,589.4 479.9,581.7 490.6,574.0 501.2,566.3 511.9,558.5 522.5,550.7 533.1,542.9 543.7,535.1 554.3,527.4 565.0,519.6 575.7,512.0 586.5,504.5 597.6,497.4 609.1,491.1 620.9,485.2 625.0,492.0 613.4,498.0 602.0,504.4 591.0,511.5 580.2,519.0 569.5,526.5 558.9,534.2 548.3,541.9 537.6,549.6 527.0,557.3 516.4,565.0 505.8,572.7 495.2,580.3 484.6,588.0 474.0,595.7 463.4,603.4 452.8,611.2 442.2,618.9 431.7,626.7 421.1,634.5 410.7,642.4 400.3,650.4 390.0,658.5 379.8,666.7 369.9,675.3 360.3,684.3 351.2,693.7 342.4,703.4 333.6,713.1 324.8,722.8 316.1,732.6 307.4,742.4 298.7,752.3 290.1,762.1 281.4,772.0 272.8,781.8 264.2,791.7 255.5,801.6 246.8,811.4 238.2,821.2 229.5,831.0 220.8,840.8 212.1,850.7 203.4,860.5 194.7,870.3 186.0,880.1 177.3,889.9 168.6,899.7 159.9,909.5 151.2,919.3" fill="#6a6b6d" />
<polygon points="149.9,918.3 158.6,908.5 167.3,898.7 176.0,888.9 184.7,879.0 193.4,869.2 202.1,859.4 210.8,849.6 219.5,839.7 228.2,829.9 236.9,820.1 245.6,810.3 254.3,800.4 263.0,790.6 271.6,780.7 280.3,770.8 288.9,761.0 297.6,751.1 306.2,741.2 314.9,731.4 323.7,721.6 332.5,711.9 341.3,702.2 350.1,692.4 359.2,683.0 368.7,674.0 378.6,665.4 388.8,657.1 399.1,649.1 409.6,641.1 420.0,633.2 430.6,625.3 441.1,617.5 451.7,609.8 462.3,602.1 472.9,594.3 483.5,586.6 494.2,579.0 504.8,571.3 515.4,563.6 526.0,555.8 536.6,548.1 547.3,540.4 557.9,532.7 568.5,525.0 579.2,517.4 590.0,510.0 601.0,502.9 612.5,496.5 624.1,490.5 628.2,497.3 616.7,503.4 605.4,509.9 594.5,517.0 583.7,524.4 573.0,531.9 562.4,539.5 551.8,547.2 541.2,554.8 530.6,562.4 520.0,570.0 509.4,577.7 498.8,585.3 488.2,593.0 477.7,600.7 467.1,608.4 456.6,616.1 446.1,623.8 435.6,631.6 425.1,639.5 414.7,647.3 404.3,655.2 394.0,663.3 383.8,671.5 373.9,680.0 364.3,688.9 355.2,698.2 346.4,707.8 337.6,717.4 328.8,727.1 320.1,736.8 311.4,746.6 302.8,756.4 294.2,766.3 285.6,776.1 277.0,786.0 268.4,795.8 259.8,805.6 251.2,815.4 242.5,825.2 233.8,835.0 225.2,844.8 216.5,854.6 207.9,864.3 199.2,874.1 190.5,883.9 181.9,893.7 173.2,903.5 164.5,913.2 155.9,923.0" fill="#727375" />
<polygon points="154.6,922.0 163.2,912.2 171.9,902.4 180.6,892.6 189.3,882.8 197.9,873.1 206.6,863.3 215.3,853.5 224.0,843.7 232.6,833.9 241.3,824.1 249.9,814.3 258.6,804.5 267.2,794.7 275.8,784.8 284.4,775.0 293.0,765.1 301.6,755.3 310.3,745.4 318.9,735.6 327.6,725.9 336.4,716.2 345.3,706.6 354.1,696.9 363.2,687.6 372.8,678.7 382.7,670.1 392.9,661.9 403.2,653.9 413.6,645.9 424.0,638.1 434.5,630.3 445.0,622.5 455.5,614.7 466.1,607.0 476.6,599.3 487.2,591.6 497.8,583.9 508.4,576.3 519.0,568.6 529.6,561.0 540.2,553.3 550.8,545.7 561.4,538.0 572.0,530.4 582.7,522.9 593.5,515.5 604.5,508.3 615.8,501.9 627.3,495.8 631.4,502.5 620.1,508.8 608.9,515.4 598.0,522.5 587.2,529.9 576.6,537.3 566.0,544.9 555.4,552.4 544.8,560.0 534.2,567.5 523.6,575.1 513.0,582.7 502.4,590.3 491.9,597.9 481.4,605.6 470.9,613.3 460.4,621.0 449.9,628.8 439.5,636.6 429.1,644.4 418.7,652.2 408.3,660.1 398.0,668.0 387.8,676.2 378.0,684.6 368.4,693.5 359.2,702.7 350.4,712.2 341.5,721.8 332.7,731.4 324.1,741.1 315.4,750.8 306.8,760.6 298.3,770.4 289.7,780.3 281.2,790.1 272.6,799.9 264.1,809.7 255.5,819.5 246.9,829.2 238.2,839.0 229.6,848.7 221.0,858.5 212.3,868.2 203.7,878.0 195.1,887.7 186.4,897.5 177.8,907.2 169.1,916.9 160.5,926.7" fill="#797a7c" />
<polygon points="159.2,925.7 167.9,915.9 176.5,906.1 185.1,896.4 193.8,886.6 202.4,876.9 211.1,867.1 219.7,857.4 228.4,847.6 237.0,837.9 245.6,828.1 254.3,818.3 262.9,808.6 271.5,798.7 280.0,788.9 288.6,779.1 297.1,769.3 305.7,759.4 314.3,749.6 322.9,739.9 331.6,730.2 340.4,720.5 349.2,711.0 358.1,701.4 367.3,692.2 376.8,683.3 386.7,674.9 396.9,666.7 407.2,658.7 417.6,650.8 428.0,643.0 438.4,635.2 448.8,627.4 459.3,619.6 469.8,611.9 480.3,604.2 490.9,596.5 501.4,588.9 512.0,581.3 522.6,573.7 533.2,566.1 543.8,558.5 554.4,551.0 565.0,543.4 575.6,535.8 586.3,528.3 597.0,521.0 607.9,513.8 619.1,507.3 630.5,501.1 634.6,507.8 623.4,514.2 612.3,520.8 601.5,528.0 590.8,535.3 580.1,542.7 569.5,550.2 558.9,557.7 548.3,565.2 537.7,572.7 527.1,580.1 516.6,587.7 506.0,595.2 495.5,602.9 485.1,610.5 474.6,618.2 464.2,626.0 453.8,633.7 443.4,641.5 433.0,649.3 422.7,657.1 412.3,664.9 402.0,672.8 391.9,680.9 382.0,689.3 372.4,698.0 363.2,707.2 354.3,716.6 345.5,726.1 336.7,735.6 328.1,745.3 319.5,755.0 310.9,764.8 302.4,774.6 293.9,784.4 285.4,794.2 276.9,804.0 268.4,813.8 259.8,823.5 251.2,833.2 242.6,843.0 234.0,852.7 225.4,862.4 216.8,872.1 208.2,881.8 199.6,891.5 191.0,901.2 182.4,910.9 173.8,920.6 165.2,930.4" fill="#808183" />
<polygon points="163.9,929.3 172.5,919.6 181.1,909.9 189.7,900.2 198.3,890.5 206.9,880.7 215.6,871.0 224.2,861.3 232.8,851.6 241.4,841.8 250.0,832.1 258.6,822.4 267.2,812.6 275.7,802.8 284.2,793.0 292.7,783.2 301.3,773.4 309.8,763.6 318.3,753.9 326.9,744.1 335.6,734.4 344.4,724.9 353.2,715.4 362.1,705.9 371.3,696.8 380.9,688.0 390.8,679.6 400.9,671.5 411.2,663.6 421.6,655.7 431.9,647.9 442.3,640.1 452.7,632.3 463.1,624.6 473.6,616.8 484.0,609.1 494.5,601.5 505.0,593.8 515.6,586.3 526.1,578.7 536.7,571.2 547.3,563.7 557.9,556.2 568.5,548.7 579.1,541.2 589.8,533.8 600.5,526.4 611.3,519.3 622.5,512.7 633.7,506.3 637.8,513.1 626.7,519.6 615.7,526.3 604.9,533.5 594.3,540.8 583.6,548.1 573.1,555.6 562.5,563.0 551.9,570.4 541.3,577.8 530.7,585.2 520.2,592.7 509.6,600.2 499.2,607.8 488.8,615.5 478.4,623.1 468.0,630.9 457.7,638.6 447.3,646.4 437.0,654.2 426.7,662.0 416.3,669.8 406.1,677.6 395.9,685.6 386.0,694.0 376.5,702.6 367.3,711.7 358.3,721.0 349.5,730.4 340.7,739.9 332.1,749.5 323.5,759.2 315.0,769.0 306.5,778.7 298.1,788.5 289.6,798.3 281.1,808.1 272.6,817.8 264.1,827.5 255.6,837.2 247.0,846.9 238.4,856.6 229.9,866.3 221.3,876.0 212.7,885.6 204.1,895.3 195.5,905.0 187.0,914.7 178.4,924.3 169.8,934.0" fill="#868789" />
<polygon points="168.5,933.0 177.1,923.3 185.7,913.6 194.3,903.9 202.8,894.3 211.4,884.6 220.0,874.9 228.6,865.2 237.2,855.5 245.8,845.8 254.3,836.1 262.9,826.4 271.4,816.7 279.9,806.9 288.4,797.2 296.9,787.4 305.4,777.6 313.9,767.8 322.4,758.1 330.9,748.4 339.6,738.7 348.4,729.2 357.2,719.8 366.1,710.4 375.3,701.3 384.9,692.6 394.8,684.3 404.9,676.3 415.2,668.4 425.6,660.6 435.9,652.8 446.2,645.0 456.6,637.3 466.9,629.5 477.3,621.8 487.7,614.1 498.2,606.4 508.6,598.8 519.1,591.3 529.7,583.8 540.3,576.3 550.9,568.9 561.5,561.5 572.1,554.1 582.7,546.6 593.3,539.2 604.0,531.9 614.8,524.8 625.8,518.1 636.9,511.6 641.0,518.3 630.0,525.0 619.2,531.8 608.4,539.0 597.8,546.2 587.2,553.5 576.6,560.9 566.0,568.3 555.4,575.6 544.8,582.9 534.3,590.3 523.7,597.7 513.2,605.2 502.8,612.7 492.5,620.4 482.1,628.1 471.8,635.8 461.5,643.6 451.2,651.3 441.0,659.1 430.7,666.9 420.4,674.6 410.1,682.4 400.0,690.3 390.1,698.6 380.5,707.2 371.3,716.2 362.3,725.4 353.4,734.7 344.7,744.2 336.1,753.8 327.5,763.4 319.1,773.2 310.6,782.9 302.2,792.7 293.8,802.4 285.4,812.2 276.9,821.9 268.4,831.6 259.9,841.3 251.4,850.9 242.8,860.6 234.3,870.2 225.7,879.8 217.2,889.5 208.6,899.1 200.1,908.8 191.5,918.4 183.0,928.1 174.4,937.7" fill="#8c8d8f" />
<polygon points="173.1,936.7 181.7,927.0 190.3,917.4 198.8,907.7 207.4,898.1 215.9,888.4 224.5,878.8 233.1,869.1 241.6,859.5 250.2,849.8 258.7,840.1 267.2,830.5 275.7,820.8 284.2,811.0 292.6,801.3 301.1,791.5 309.5,781.7 317.9,772.0 326.4,762.3 334.9,752.6 343.6,743.0 352.3,733.5 361.2,724.2 370.1,714.9 379.4,705.9 389.0,697.3 398.8,689.0 409.0,681.0 419.2,673.2 429.6,665.5 439.9,657.7 450.1,650.0 460.4,642.2 470.7,634.4 481.1,626.7 491.4,619.0 501.8,611.4 512.2,603.8 522.7,596.3 533.3,588.8 543.8,581.5 554.4,574.1 565.0,566.8 575.6,559.4 586.2,552.0 596.8,544.7 607.5,537.4 618.2,530.3 629.1,523.5 640.1,516.9 644.2,523.6 633.4,530.4 622.6,537.3 611.9,544.4 601.3,551.7 590.7,558.9 580.2,566.2 569.6,573.5 559.0,580.8 548.4,588.0 537.8,595.3 527.3,602.7 516.9,610.1 506.5,617.7 496.2,625.3 485.9,633.0 475.6,640.7 465.4,648.5 455.2,656.3 444.9,664.0 434.7,671.7 424.4,679.4 414.1,687.1 404.0,695.0 394.1,703.3 384.5,711.8 375.3,720.7 366.3,729.8 357.4,739.1 348.7,748.5 340.1,758.0 331.6,767.6 323.1,777.3 314.7,787.1 306.4,796.8 298.0,806.5 289.6,816.3 281.2,826.0 272.8,835.6 264.3,845.3 255.8,854.9 247.3,864.5 238.7,874.1 230.2,883.7 221.7,893.3 213.2,902.9 204.7,912.5 196.1,922.1 187.6,931.8 179.1,941.4" fill="#919294" />
<polygon points="177.8,940.3 186.3,930.7 194.8,921.1 203.4,911.5 211.9,901.9 220.4,892.3 229.0,882.6 237.5,873.0 246.0,863.4 254.5,853.8 263.0,844.1 271.5,834.5 280.0,824.8 288.4,815.1 296.8,805.4 305.2,795.6 313.6,785.9 322.0,776.2 330.4,766.5 338.9,756.8 347.5,747.3 356.3,737.9 365.2,728.6 374.2,719.4 383.4,710.5 393.0,702.0 402.9,693.7 413.0,685.8 423.3,678.1 433.6,670.4 443.8,662.6 454.1,654.9 464.3,647.1 474.6,639.4 484.8,631.6 495.1,623.9 505.5,616.3 515.8,608.7 526.3,601.3 536.8,593.9 547.4,586.6 558.0,579.3 568.6,572.1 579.2,564.7 589.7,557.4 600.3,550.1 610.9,542.9 621.6,535.8 632.4,528.9 643.3,522.1 647.4,528.9 636.7,535.8 626.0,542.8 615.4,549.9 604.8,557.1 594.3,564.3 583.7,571.6 573.1,578.8 562.6,586.0 552.0,593.2 541.4,600.4 530.9,607.7 520.5,615.1 510.1,622.6 499.8,630.2 489.6,637.9 479.4,645.7 469.2,653.4 459.1,661.2 448.9,668.9 438.7,676.6 428.4,684.3 418.2,691.9 408.0,699.8 398.2,707.9 388.6,716.4 379.3,725.2 370.3,734.2 361.4,743.4 352.6,752.7 344.1,762.3 335.6,771.9 327.2,781.5 318.9,791.2 310.5,800.9 302.2,810.6 293.9,820.4 285.5,830.0 277.1,839.7 268.6,849.3 260.1,858.9 251.7,868.4 243.2,878.0 234.7,887.6 226.2,897.2 217.7,906.7 209.2,916.3 200.7,925.9 192.2,935.5 183.7,945.0" fill="#97989a" />
<polygon points="182.4,944.0 190.9,934.4 199.4,924.8 207.9,915.3 216.4,905.7 224.9,896.1 233.4,886.5 241.9,876.9 250.4,867.3 258.9,857.7 267.4,848.1 275.9,838.5 284.3,828.9 292.7,819.2 301.0,809.5 309.4,799.8 317.7,790.0 326.1,780.3 334.5,770.7 342.9,761.1 351.5,751.6 360.3,742.2 369.1,733.0 378.2,723.9 387.5,715.1 397.1,706.6 406.9,698.4 417.0,690.6 427.3,682.9 437.6,675.3 447.8,667.6 458.0,659.8 468.2,652.0 478.4,644.3 488.6,636.6 498.8,628.9 509.1,621.2 519.5,613.7 529.9,606.3 540.4,599.0 551.0,591.7 561.6,584.5 572.2,577.3 582.7,570.1 593.3,562.8 603.8,555.6 614.4,548.4 625.1,541.2 635.8,534.3 646.5,527.4 650.6,534.2 640.0,541.2 629.5,548.3 618.9,555.4 608.3,562.6 597.8,569.7 587.3,576.9 576.7,584.1 566.1,591.2 555.5,598.3 545.0,605.4 534.5,612.7 524.1,620.0 513.8,627.6 503.5,635.2 493.4,642.9 483.2,650.6 473.1,658.3 463.0,666.1 452.9,673.8 442.7,681.5 432.4,689.1 422.2,696.7 412.1,704.5 402.2,712.6 392.6,721.0 383.3,729.6 374.2,738.6 365.3,747.7 356.6,757.0 348.1,766.5 339.6,776.1 331.3,785.7 323.0,795.4 314.7,805.1 306.4,814.8 298.1,824.4 289.8,834.1 281.4,843.7 273.0,853.3 264.5,862.8 256.1,872.4 247.6,881.9 239.2,891.5 230.7,901.0 222.2,910.6 213.8,920.1 205.3,929.6 196.8,939.2 188.4,948.7" fill="#9c9d9f" />
<polygon points="187.1,947.7 195.5,938.1 204.0,928.6 212.5,919.0 221.0,909.5 229.4,899.9 237.9,890.4 246.4,880.8 254.8,871.3 263.3,861.7 271.7,852.2 280.2,842.6 288.6,833.0 296.9,823.3 305.2,813.6 313.5,803.9 321.8,794.2 330.1,784.5 338.5,774.9 346.9,765.3 355.5,755.8 364.2,746.5 373.1,737.4 382.2,728.4 391.5,719.7 401.1,711.3 410.9,703.1 421.1,695.4 431.3,687.8 441.6,680.2 451.7,672.5 461.9,664.7 472.0,657.0 482.2,649.2 492.3,641.5 502.5,633.8 512.8,626.2 523.1,618.7 533.5,611.3 544.0,604.0 554.5,596.8 565.1,589.7 575.7,582.6 586.3,575.4 596.8,568.2 607.3,561.0 617.9,553.9 628.5,546.7 639.1,539.7 649.7,532.7 653.8,539.4 643.4,546.6 632.9,553.8 622.4,560.9 611.8,568.0 601.3,575.1 590.8,582.3 580.3,589.3 569.7,596.4 559.1,603.4 548.5,610.5 538.1,617.7 527.7,625.0 517.4,632.5 507.2,640.1 497.1,647.8 487.0,655.5 477.0,663.3 466.9,671.0 456.8,678.8 446.7,686.4 436.4,693.9 426.2,701.5 416.1,709.2 406.3,717.2 396.7,725.5 387.3,734.1 378.2,743.0 369.3,752.1 360.6,761.3 352.1,770.7 343.7,780.3 335.4,789.9 327.1,799.5 318.8,809.2 310.6,818.9 302.4,828.5 294.1,838.2 285.7,847.7 277.3,857.3 268.9,866.8 260.5,876.3 252.1,885.8 243.6,895.4 235.2,904.9 226.8,914.4 218.3,923.9 209.9,933.4 201.5,942.9 193.0,952.4" fill="#a1a2a4" />
<polygon points="191.7,951.4 200.2,941.8 208.6,932.3 217.0,922.8 225.5,913.3 233.9,903.8 242.4,894.3 250.8,884.7 259.3,875.2 267.7,865.7 276.1,856.2 284.5,846.6 292.9,837.0 301.2,827.4 309.4,817.7 317.7,808.0 325.9,798.4 334.2,788.7 342.5,779.1 350.9,769.5 359.5,760.1 368.2,750.8 377.1,741.8 386.2,732.9 395.5,724.3 405.1,715.9 415.0,707.9 425.1,700.1 435.3,692.6 445.6,685.0 455.7,677.4 465.8,669.7 475.9,661.9 486.0,654.1 496.1,646.4 506.2,638.7 516.4,631.1 526.7,623.6 537.1,616.3 547.5,609.1 558.1,602.0 568.7,594.9 579.3,587.9 589.8,580.8 600.3,573.6 610.9,566.5 621.4,559.4 631.9,552.2 642.4,545.1 652.9,538.0 657.0,544.7 646.7,552.0 636.3,559.2 625.9,566.4 615.4,573.5 604.9,580.5 594.4,587.6 583.8,594.6 573.2,601.6 562.7,608.5 552.1,615.5 541.6,622.7 531.3,630.0 521.1,637.4 510.9,645.0 500.9,652.7 490.8,660.5 480.8,668.2 470.8,676.0 460.8,683.7 450.7,691.3 440.5,698.8 430.2,706.3 420.1,713.9 410.3,721.9 400.7,730.1 391.3,738.6 382.2,747.4 373.3,756.4 364.6,765.6 356.1,775.0 347.7,784.5 339.4,794.0 331.2,803.7 323.0,813.3 314.8,823.0 306.6,832.6 298.3,842.2 290.0,851.8 281.7,861.3 273.3,870.8 264.9,880.3 256.5,889.8 248.1,899.2 239.7,908.7 231.3,918.2 222.9,927.6 214.5,937.1 206.1,946.6 197.7,956.1" fill="#a5a6a8" />
<polygon points="196.4,955.0 204.8,945.5 213.2,936.1 221.6,926.6 230.0,917.1 238.4,907.6 246.9,898.1 255.3,888.7 263.7,879.2 272.1,869.7 280.4,860.2 288.8,850.6 297.1,841.1 305.4,831.5 313.6,821.8 321.8,812.2 330.0,802.5 338.3,792.9 346.6,783.3 354.9,773.8 363.5,764.4 372.2,755.2 381.1,746.2 390.2,737.4 399.6,728.9 409.2,720.6 419.0,712.6 429.1,704.9 439.3,697.4 449.6,689.9 459.7,682.3 469.7,674.6 479.8,666.8 489.8,659.1 499.8,651.3 509.9,643.7 520.1,636.1 530.3,628.6 540.6,621.3 551.1,614.1 561.7,607.1 572.2,600.1 582.8,593.1 593.4,586.1 603.9,579.0 614.4,571.9 624.9,564.8 635.4,557.7 645.8,550.5 656.1,543.2 659.3,548.5 649.1,555.9 638.8,563.2 628.4,570.3 617.9,577.4 607.4,584.4 596.9,591.4 586.4,598.4 575.8,605.3 565.2,612.2 554.7,619.2 544.2,626.3 533.9,633.5 523.7,641.0 513.6,648.6 503.6,656.3 493.6,664.0 483.6,671.8 473.6,679.5 463.6,687.2 453.6,694.8 443.4,702.3 433.1,709.7 423.0,717.3 413.2,725.2 403.6,733.4 394.2,741.9 385.1,750.6 376.1,759.5 367.4,768.7 358.9,778.0 350.6,787.5 342.4,797.1 334.2,806.7 326.0,816.3 317.8,826.0 309.7,835.6 301.4,845.2 293.1,854.7 284.8,864.2 276.4,873.6 268.1,883.1 259.7,892.6 251.3,902.0 242.9,911.5 234.6,920.9 226.2,930.3 217.8,939.8 209.4,949.2 201.0,958.7" fill="#aaabad" />
<polyline points="136.0,907.3 144.8,897.4 153.6,887.5 162.4,877.5 171.1,867.6 179.9,857.7 188.7,847.8 197.5,837.8 206.3,827.9 215.1,818.0 223.9,808.1 232.7,798.1 241.5,788.2 250.2,778.3 259.0,768.4 267.8,758.4 276.6,748.5 285.4,738.6 294.1,728.6 302.9,718.7 311.7,708.8 320.6,698.9 329.3,689.0 338.0,679.0 347.0,669.2 356.6,660.1 366.5,651.3 376.7,642.8 387.1,634.5 397.6,626.4 408.1,618.4 418.8,610.6 429.5,602.8 440.3,595.0 451.1,587.3 461.8,579.6 472.6,571.8 483.4,564.1 494.1,556.3 504.7,548.4 515.4,540.5 526.0,532.5 536.6,524.6 547.2,516.7 557.9,508.8 568.7,501.1 579.6,493.5 590.7,486.4 602.5,480.3 614.5,474.7" fill="none" stroke="#454545" stroke-width="1.2" stroke-linecap="round" stroke-linejoin="round" />
<polygon points="257.5,895.1 263.1,886.1 268.5,877.0 273.9,867.9 279.4,858.8 284.8,849.7 290.3,840.7 296.0,831.7 301.8,822.9 307.9,814.2 314.1,805.6 320.5,797.2 327.0,788.8 333.6,780.5 340.3,772.3 347.1,764.1 354.0,756.1 361.0,748.1 368.0,740.2 375.2,732.5 382.5,724.8 389.9,717.2 397.5,709.8 405.2,702.5 413.1,695.4 421.1,688.5 429.2,681.6 437.3,674.8 445.5,668.1 453.7,661.4 461.9,654.7 470.1,648.0 478.2,641.2 486.3,634.4 494.5,627.6 502.6,620.8 510.8,614.1 519.0,607.4 527.3,600.8 535.7,594.4 544.3,588.1 552.9,582.0 561.7,576.1 570.6,570.4 579.7,564.8 588.7,559.3 597.8,553.9 606.9,548.5 616.0,543.0 625.1,537.5 634.3,540.5 625.7,546.0 617.0,551.4 608.3,556.8 599.6,562.2 591.0,567.6 582.3,573.0 573.7,578.6 565.2,584.3 556.8,590.1 548.5,596.1 540.3,602.1 532.1,608.3 524.0,614.5 516.0,620.8 508.0,627.2 500.0,633.6 492.0,640.0 484.1,646.5 476.1,652.9 468.1,659.3 460.2,665.7 452.2,672.1 444.3,678.6 436.4,685.2 428.6,691.8 420.9,698.5 413.3,705.3 405.7,712.2 398.3,719.1 391.0,726.2 383.7,733.4 376.6,740.7 369.6,748.1 362.6,755.6 355.8,763.2 349.1,770.9 342.5,778.7 336.0,786.6 329.6,794.5 323.3,802.6 317.2,810.8 311.3,819.1 305.5,827.6 299.9,836.0 294.3,844.6 288.7,853.1 283.1,861.7 277.5,870.2 271.9,878.7" fill="#969799" />
<polygon points="270.8,879.9 276.5,871.4 282.1,862.8 287.6,854.2 293.2,845.6 298.8,837.1 304.4,828.5 310.2,820.1 316.1,811.7 322.2,803.5 328.4,795.3 334.8,787.3 341.3,779.4 347.9,771.6 354.6,763.9 361.5,756.2 368.4,748.7 375.4,741.2 382.6,733.9 389.8,726.7 397.1,719.6 404.6,712.5 412.1,705.6 419.7,698.8 427.5,692.0 435.3,685.4 443.2,678.8 451.1,672.3 459.1,665.9 467.1,659.4 475.1,653.0 483.0,646.6 491.0,640.1 499.0,633.7 507.0,627.2 515.0,620.8 523.0,614.5 531.1,608.2 539.3,602.0 547.5,595.9 555.9,590.0 564.3,584.1 572.8,578.4 581.4,572.8 590.1,567.4 598.8,562.0 607.6,556.6 616.3,551.2 625.0,545.8 633.6,540.3 642.9,543.2 634.7,548.7 626.4,554.1 618.1,559.5 609.7,564.8 601.4,570.1 593.1,575.5 584.8,580.9 576.6,586.4 568.4,592.0 560.3,597.6 552.2,603.3 544.2,609.1 536.2,615.0 528.3,620.9 520.4,626.8 512.6,632.9 504.8,638.9 497.0,645.0 489.3,651.2 481.5,657.3 473.8,663.5 466.0,669.6 458.3,675.8 450.6,682.1 443.0,688.4 435.4,694.7 427.9,701.1 420.4,707.5 412.9,713.9 405.5,720.5 398.2,727.1 391.0,733.8 384.0,740.7 377.0,747.7 370.2,754.8 363.4,762.0 356.8,769.3 350.3,776.7 343.9,784.3 337.6,791.9 331.5,799.6 325.5,807.5 319.6,815.4 313.8,823.4 308.1,831.4 302.4,839.4 296.7,847.5 290.9,855.5 285.2,863.5" fill="#a3a4a6" />
<polygon points="284.1,864.7 289.9,856.7 295.6,848.6 301.3,840.5 307.0,832.5 312.7,824.4 318.5,816.4 324.4,808.4 330.3,800.5 336.5,792.7 342.7,785.1 349.1,777.5 355.6,770.1 362.3,762.7 369.0,755.5 375.9,748.3 382.8,741.3 389.9,734.4 397.1,727.6 404.4,720.9 411.8,714.4 419.2,707.9 426.7,701.4 434.3,695.0 441.9,688.6 449.5,682.3 457.2,676.1 464.9,669.8 472.7,663.6 480.4,657.5 488.2,651.3 496.0,645.2 503.8,639.0 511.6,632.9 519.4,626.9 527.3,620.9 535.3,614.9 543.2,609.1 551.3,603.2 559.4,597.5 567.5,591.8 575.7,586.2 583.9,580.7 592.2,575.3 600.6,569.9 608.9,564.6 617.3,559.3 625.6,553.9 633.9,548.5 642.2,543.0 651.5,546.0 643.6,551.4 635.7,556.8 627.8,562.1 619.8,567.4 611.8,572.7 603.9,577.9 595.9,583.2 587.9,588.5 580.0,593.8 572.1,599.2 564.2,604.6 556.3,610.0 548.5,615.4 540.7,620.9 532.9,626.5 525.2,632.1 517.6,637.8 510.0,643.6 502.4,649.5 494.9,655.3 487.3,661.2 479.8,667.1 472.3,673.1 464.9,679.0 457.4,685.0 449.9,690.9 442.5,696.9 435.0,702.8 427.5,708.8 420.1,714.7 412.8,720.8 405.5,727.0 398.4,733.3 391.4,739.8 384.5,746.4 377.8,753.1 371.1,760.0 364.6,766.9 358.2,774.0 351.9,781.2 345.7,788.4 339.7,795.8 333.7,803.2 327.8,810.7 321.9,818.2 316.1,825.8 310.2,833.3 304.4,840.8 298.5,848.3" fill="#aaabad" />
<polygon points="297.4,849.5 303.3,842.0 309.1,834.4 315.0,826.9 320.8,819.3 326.7,811.7 332.6,804.2 338.5,796.7 344.6,789.3 350.7,782.0 357.0,774.8 363.4,767.7 370.0,760.7 376.6,753.8 383.4,747.1 390.3,740.4 397.3,733.9 404.4,727.5 411.6,721.3 418.9,715.2 426.4,709.2 433.8,703.2 441.3,697.2 448.8,691.2 456.2,685.2 463.7,679.2 471.2,673.3 478.7,667.3 486.3,661.4 493.8,655.5 501.4,649.6 509.0,643.7 516.6,637.9 524.2,632.2 531.9,626.5 539.7,620.9 547.5,615.4 555.4,609.9 563.3,604.5 571.2,599.1 579.1,593.7 587.0,588.3 595.0,583.0 603.0,577.7 611.0,572.4 619.0,567.2 627.0,561.9 635.0,556.6 642.9,551.2 650.8,545.7 659.3,548.5 651.8,553.9 644.3,559.3 636.7,564.6 629.1,569.8 621.5,575.0 613.8,580.1 606.1,585.3 598.4,590.4 590.7,595.6 583.0,600.6 575.2,605.7 567.5,610.7 559.8,615.8 552.1,620.9 544.4,626.1 536.8,631.4 529.3,636.8 521.9,642.3 514.5,647.9 507.2,653.5 499.8,659.2 492.5,664.8 485.2,670.5 477.9,676.2 470.6,681.8 463.3,687.5 455.9,693.1 448.5,698.5 441.0,704.0 433.5,709.4 426.1,714.9 418.8,720.6 411.7,726.5 404.7,732.5 397.7,738.7 390.9,744.9 384.3,751.3 377.7,757.9 371.3,764.5 365.0,771.3 358.8,778.1 352.7,785.1 346.6,792.1 340.6,799.1 334.6,806.1 328.6,813.2 322.7,820.2 316.7,827.3 310.7,834.3" fill="#a4a5a7" />
<polygon points="235.0,880.0 256.7,896.7 233.0,924.0 212.5,905.0" fill="#a2a3a5" stroke="#555" stroke-width="0.8" stroke-linejoin="round" />
<polygon points="235.0,880.0 242.0,885.5 219.5,911.0 212.5,905.0" fill="#8e8f91" />
<polygon points="246.0,888.5 251.0,892.5 228.0,919.0 223.0,915.0" fill="#b6b7b9" />
<path d="M246.0 888.0 L251.3 879.4 L256.5 870.8 L261.6 862.2 L266.8 853.6 L271.9 845.0 L277.1 836.3 L282.5 827.7 L288.1 819.2 L293.9 810.6 L300.0 802.0 L307.1 792.5 L314.5 782.9 L322.1 773.2 L330.0 763.5 L338.1 753.8 L346.3 744.3 L354.7 734.9 L363.1 725.6 L371.5 716.7 L380.0 708.0 L388.1 700.1 L396.3 692.3 L404.7 684.8 L413.2 677.5 L421.7 670.3 L430.2 663.2 L438.8 656.2 L447.3 649.3 L455.7 642.4 L464.0 635.5 L471.7 629.1 L479.3 622.7 L486.9 616.4 L494.4 610.1 L501.9 603.9 L509.4 597.8 L517.0 591.8 L524.6 585.9 L532.2 580.1 L540.0 574.5 L547.6 569.2 L555.3 564.1 L563.1 559.2 L570.9 554.3 L578.7 549.6 L586.6 544.9 L594.5 540.2 L602.3 535.5 L610.2 530.8 L618.0 526.0" fill="none" stroke="#505050" stroke-width="28.2"/>
<path d="M246.3 888.2 L251.6 879.6 L256.8 870.9 L261.9 862.3 L267.0 853.7 L272.2 845.1 L277.4 836.5 L282.8 827.9 L288.3 819.3 L294.1 810.7 L300.2 802.2 L307.3 792.7 L314.7 783.0 L322.4 773.4 L330.3 763.7 L338.3 754.0 L346.6 744.5 L354.9 735.1 L363.3 725.8 L371.8 716.9 L380.2 708.2 L388.3 700.3 L396.5 692.6 L404.9 685.0 L413.4 677.7 L421.9 670.5 L430.4 663.4 L439.0 656.4 L447.5 649.5 L455.9 642.6 L464.2 635.7 L471.9 629.3 L479.5 622.9 L487.0 616.6 L494.6 610.3 L502.1 604.1 L509.6 598.0 L517.1 592.0 L524.7 586.1 L532.4 580.4 L540.2 574.7 L547.8 569.5 L555.5 564.4 L563.3 559.4 L571.1 554.6 L578.9 549.8 L586.8 545.2 L594.6 540.5 L602.5 535.8 L610.3 531.1 L618.2 526.3" fill="none" stroke="#7c7d7f" stroke-width="26.6"/>
<path d="M245.2 887.5 L250.6 878.9 L255.7 870.3 L260.9 861.7 L266.0 853.1 L271.1 844.5 L276.4 835.9 L281.7 827.3 L287.3 818.7 L293.1 810.1 L299.3 801.5 L306.4 791.9 L313.8 782.3 L321.4 772.6 L329.3 762.9 L337.4 753.2 L345.7 743.7 L354.0 734.2 L362.4 725.0 L370.9 716.0 L379.4 707.4 L387.5 699.4 L395.7 691.7 L404.1 684.1 L412.6 676.8 L421.1 669.6 L429.7 662.5 L438.2 655.5 L446.7 648.6 L455.1 641.7 L463.4 634.8 L471.1 628.4 L478.7 622.0 L486.3 615.7 L493.8 609.4 L501.3 603.2 L508.8 597.1 L516.4 591.1 L524.0 585.2 L531.7 579.4 L539.5 573.8 L547.1 568.5 L554.8 563.4 L562.6 558.4 L570.4 553.6 L578.3 548.8 L586.1 544.1 L594.0 539.4 L601.9 534.8 L609.7 530.0 L617.5 525.2" fill="none" stroke="#939496" stroke-width="24"/>
<path d="M244.3 886.9 L249.6 878.4 L254.8 869.8 L259.9 861.2 L265.0 852.5 L270.2 843.9 L275.4 835.3 L280.8 826.7 L286.4 818.1 L292.2 809.4 L298.4 800.8 L305.5 791.3 L312.9 781.6 L320.6 771.9 L328.5 762.2 L336.6 752.5 L344.8 742.9 L353.2 733.5 L361.6 724.3 L370.1 715.3 L378.6 706.6 L386.7 698.6 L395.0 690.9 L403.4 683.3 L411.9 675.9 L420.4 668.7 L429.0 661.6 L437.5 654.6 L446.0 647.7 L454.4 640.8 L462.7 634.0 L470.4 627.5 L478.0 621.2 L485.6 614.8 L493.1 608.5 L500.6 602.3 L508.2 596.2 L515.7 590.2 L523.3 584.3 L531.0 578.5 L538.8 572.9 L546.5 567.6 L554.2 562.4 L562.0 557.5 L569.9 552.6 L577.7 547.9 L585.6 543.2 L593.4 538.5 L601.3 533.8 L609.1 529.1 L617.0 524.3" fill="none" stroke="#a0a1a3" stroke-width="19"/>
<path d="M243.4 886.4 L248.8 877.8 L253.9 869.2 L259.1 860.6 L264.2 852.0 L269.3 843.4 L274.6 834.8 L280.0 826.1 L285.6 817.5 L291.4 808.9 L297.6 800.2 L304.7 790.7 L312.1 781.0 L319.8 771.3 L327.7 761.6 L335.8 751.9 L344.1 742.3 L352.4 732.8 L360.9 723.6 L369.4 714.6 L377.9 705.9 L386.0 697.9 L394.3 690.1 L402.7 682.6 L411.2 675.2 L419.8 668.0 L428.3 660.9 L436.9 653.9 L445.4 646.9 L453.8 640.0 L462.1 633.2 L469.8 626.8 L477.4 620.4 L484.9 614.1 L492.5 607.8 L500.0 601.6 L507.5 595.4 L515.1 589.4 L522.7 583.5 L530.5 577.7 L538.3 572.1 L546.0 566.7 L553.7 561.6 L561.5 556.6 L569.3 551.8 L577.2 547.0 L585.1 542.3 L592.9 537.6 L600.8 533.0 L608.6 528.2 L616.4 523.4" fill="none" stroke="#aaabad" stroke-width="13"/>
<path d="M242.8 886.0 L248.1 877.4 L253.3 868.8 L258.4 860.2 L263.5 851.6 L268.6 843.0 L273.9 834.4 L279.3 825.7 L284.9 817.1 L290.8 808.4 L296.9 799.8 L304.1 790.2 L311.5 780.5 L319.2 770.8 L327.1 761.1 L335.2 751.4 L343.5 741.8 L351.9 732.3 L360.3 723.0 L368.8 714.0 L377.3 705.3 L385.5 697.3 L393.8 689.5 L402.2 682.0 L410.7 674.6 L419.3 667.3 L427.8 660.2 L436.4 653.2 L444.9 646.3 L453.3 639.4 L461.6 632.6 L469.2 626.2 L476.9 619.8 L484.4 613.4 L492.0 607.2 L499.5 600.9 L507.0 594.8 L514.6 588.8 L522.3 582.9 L530.0 577.1 L537.8 571.4 L545.5 566.1 L553.3 560.9 L561.1 556.0 L568.9 551.1 L576.8 546.3 L584.7 541.6 L592.5 537.0 L600.4 532.3 L608.2 527.6 L616.0 522.8" fill="none" stroke="#b3b4b6" stroke-width="7"/>
<path d="M242.4 885.8 L247.7 877.2 L252.9 868.6 L258.0 860.0 L263.1 851.4 L268.3 842.8 L273.6 834.1 L279.0 825.5 L284.6 816.8 L290.4 808.2 L296.6 799.5 L303.7 790.0 L311.2 780.3 L318.9 770.5 L326.8 760.8 L334.9 751.1 L343.2 741.5 L351.6 732.0 L360.0 722.8 L368.5 713.8 L377.0 705.0 L385.2 697.0 L393.5 689.2 L401.9 681.7 L410.4 674.3 L419.0 667.0 L427.6 659.9 L436.1 652.9 L444.6 646.0 L453.0 639.1 L461.3 632.3 L469.0 625.9 L476.6 619.5 L484.2 613.1 L491.7 606.8 L499.2 600.6 L506.8 594.5 L514.4 588.5 L522.0 582.5 L529.7 576.7 L537.6 571.1 L545.3 565.7 L553.0 560.6 L560.9 555.6 L568.7 550.8 L576.6 546.0 L584.5 541.3 L592.3 536.6 L600.2 531.9 L608.0 527.2 L615.8 522.4" fill="none" stroke="#bbbcbe" stroke-width="2.5"/>
<polygon points="130.0,902.0 139.3,891.5 148.6,881.0 157.9,870.5 167.2,860.0 176.5,849.5 185.8,839.0 195.1,828.5 204.4,818.0 213.7,807.5 223.0,797.0 232.5,786.2 242.4,775.0 252.6,763.6 262.7,752.1 272.8,740.7 282.6,729.6 292.0,719.0 300.8,709.1 308.8,700.0 316.0,692.0 319.5,688.0 322.7,684.4 325.7,681.0 328.4,677.8 331.1,674.8 333.7,671.8 336.3,668.9 339.0,666.0 341.9,663.1 345.0,660.0 348.6,656.6 352.1,653.3 355.8,650.0 359.4,646.8 363.2,643.6 367.2,640.3 371.3,636.9 375.6,633.5 380.2,629.8 385.0,626.0 393.1,619.7 402.0,613.0 411.6,605.9 421.6,598.6 432.1,591.0 442.7,583.4 453.5,575.7 464.2,568.0 474.8,560.4 485.0,553.0 495.3,545.5 506.0,537.5 517.0,529.3 528.0,521.0 538.9,512.9 549.5,505.0 559.6,497.7 569.0,491.1 577.5,485.3 585.0,480.5 588.2,478.6 591.1,477.0 593.9,475.5 596.5,474.3 598.9,473.1 601.3,472.0 603.7,470.9 606.0,469.9 608.5,468.7 611.0,467.5 614.5,474.7 611.9,476.0 609.4,477.1 607.0,478.2 604.6,479.3 602.3,480.3 599.9,481.5 597.5,482.7 595.0,484.0 592.2,485.6 589.2,487.3 581.9,491.9 573.6,497.6 564.3,504.2 554.2,511.5 543.7,519.3 532.8,527.4 521.8,535.7 510.8,543.9 500.0,551.9 489.7,559.5 479.5,566.9 468.9,574.5 458.2,582.2 447.4,589.9 436.7,597.5 426.3,605.1 416.3,612.4 406.8,619.4 398.0,626.1 389.9,632.3 385.1,636.1 380.6,639.7 376.3,643.2 372.3,646.5 368.4,649.7 364.7,652.9 361.1,656.0 357.5,659.2 354.0,662.4 350.6,665.7 347.6,668.7 344.8,671.6 342.2,674.4 339.6,677.2 337.1,680.0 334.5,683.0 331.7,686.2 328.8,689.6 325.5,693.3 322.0,697.3 314.8,705.4 306.7,714.4 297.9,724.3 288.6,734.9 278.8,746.0 268.7,757.4 258.5,768.9 248.4,780.3 238.5,791.5 229.0,802.3 219.7,812.8 210.4,823.3 201.1,833.8 191.8,844.3 182.5,854.8 173.2,865.3 163.9,875.8 154.6,886.3 145.3,896.8 136.0,907.3" fill="#a8a9ab" />
<polyline points="130.0,902.0 139.3,891.5 148.6,881.0 157.9,870.5 167.2,860.0 176.5,849.5 185.8,839.0 195.1,828.5 204.4,818.0 213.7,807.5 223.0,797.0 232.5,786.2 242.4,775.0 252.6,763.6 262.7,752.1 272.8,740.7 282.6,729.6 292.0,719.0 300.8,709.1 308.8,700.0 316.0,692.0 319.5,688.0 322.7,684.4 325.7,681.0 328.4,677.8 331.1,674.8 333.7,671.8 336.3,668.9 339.0,666.0 341.9,663.1 345.0,660.0 348.6,656.6 352.1,653.3 355.8,650.0 359.4,646.8 363.2,643.6 367.2,640.3 371.3,636.9 375.6,633.5 380.2,629.8 385.0,626.0 393.1,619.7 402.0,613.0 411.6,605.9 421.6,598.6 432.1,591.0 442.7,583.4 453.5,575.7 464.2,568.0 474.8,560.4 485.0,553.0 495.3,545.5 506.0,537.5 517.0,529.3 528.0,521.0 538.9,512.9 549.5,505.0 559.6,497.7 569.0,491.1 577.5,485.3 585.0,480.5 588.2,478.6 591.1,477.0 593.9,475.5 596.5,474.3 598.9,473.1 601.3,472.0 603.7,470.9 606.0,469.9 608.5,468.7 611.0,467.5" fill="none" stroke="#bdbec0" stroke-width="1.4" stroke-linecap="round" stroke-linejoin="round" />
<polyline points="130.0,902.0 139.3,891.5 148.6,881.0 157.9,870.5 167.2,860.0 176.5,849.5 185.8,839.0 195.1,828.5 204.4,818.0 213.7,807.5 223.0,797.0 232.5,786.2 242.4,775.0 252.6,763.6 262.7,752.1 272.8,740.7 282.6,729.6 292.0,719.0 300.8,709.1 308.8,700.0 316.0,692.0 319.5,688.0 322.7,684.4 325.7,681.0 328.4,677.8 331.1,674.8 333.7,671.8 336.3,668.9 339.0,666.0 341.9,663.1 345.0,660.0 348.6,656.6 352.1,653.3 355.8,650.0 359.4,646.8 363.2,643.6 367.2,640.3 371.3,636.9 375.6,633.5 380.2,629.8 385.0,626.0 393.1,619.7 402.0,613.0 411.6,605.9 421.6,598.6 432.1,591.0 442.7,583.4 453.5,575.7 464.2,568.0 474.8,560.4 485.0,553.0 495.3,545.5 506.0,537.5 517.0,529.3 528.0,521.0 538.9,512.9 549.5,505.0 559.6,497.7 569.0,491.1 577.5,485.3 585.0,480.5 588.2,478.6 591.1,477.0 593.9,475.5 596.5,474.3 598.9,473.1 601.3,472.0 603.7,470.9 606.0,469.9 608.5,468.7 611.0,467.5" fill="none" stroke="#4c4c4c" stroke-width="0.6" stroke-linecap="round" stroke-linejoin="round" />
<polyline points="133.0,904.7 142.3,894.2 151.6,883.7 160.9,873.2 170.2,862.7 179.5,852.2 188.8,841.7 198.1,831.2 207.4,820.7 216.7,810.2 226.0,799.7 235.5,788.9 245.4,777.7 255.5,766.2 265.7,754.7 275.8,743.3 285.6,732.3 294.9,721.7 303.7,711.8 311.8,702.7 319.0,694.7 322.5,690.7 325.7,687.0 328.7,683.6 331.4,680.4 334.1,677.4 336.7,674.5 339.2,671.6 341.9,668.8 344.7,665.9 347.8,662.9 351.3,659.5 354.8,656.2 358.4,653.0 362.1,649.8 365.8,646.6 369.7,643.4 373.8,640.0 378.1,636.6 382.6,633.0 387.5,629.2 395.5,622.9 404.4,616.2 413.9,609.2 424.0,601.8 434.4,594.3 445.1,586.6 455.8,578.9 466.6,571.2 477.1,563.6 487.4,556.2 497.7,548.7 508.4,540.7 519.4,532.5 530.4,524.2 541.3,516.1 551.9,508.3 561.9,501.0 571.3,494.3 579.7,488.6 587.1,483.9 590.2,482.1 593.0,480.5 595.7,479.1 598.2,477.9 600.6,476.7 603.0,475.6 605.3,474.6 607.7,473.5 610.2,472.3 612.8,471.1" fill="none" stroke="#8f9092" stroke-width="0.8" stroke-linecap="round" stroke-linejoin="round" />
<polygon points="207.0,964.0 216.3,953.5 225.7,942.9 235.1,932.3 244.6,921.7 254.0,911.1 263.3,900.5 272.6,890.0 281.9,879.6 291.0,869.2 300.0,859.0 308.4,849.4 316.8,839.5 325.2,829.6 333.6,819.7 341.9,809.9 350.1,800.4 358.0,791.2 365.7,782.5 373.0,774.4 380.0,767.0 384.4,762.5 388.6,758.3 392.7,754.3 396.6,750.6 400.4,747.0 404.2,743.6 408.1,740.2 411.9,736.8 415.9,733.4 420.0,730.0 424.2,726.6 428.4,723.3 432.5,720.1 436.8,717.0 441.0,713.8 445.4,710.7 449.8,707.5 454.4,704.1 459.1,700.7 464.0,697.0 470.8,691.8 478.0,686.3 485.5,680.4 493.3,674.4 501.2,668.2 509.2,662.1 517.1,656.0 524.9,650.0 532.6,644.4 540.0,639.0 546.3,634.6 552.5,630.3 558.7,626.1 564.9,622.0 571.0,618.0 577.0,614.1 582.9,610.2 588.7,606.4 594.4,602.7 600.0,599.0 604.7,595.9 609.3,592.8 613.9,589.7 618.5,586.6 622.9,583.7 627.3,580.7 631.5,577.9 635.5,575.1 639.4,572.5 643.0,570.0 645.4,568.3 647.7,566.7 649.9,565.2 652.0,563.7 654.0,562.2 656.0,560.8 657.9,559.4 659.9,557.9 661.9,556.5 664.0,555.0 659.3,548.5 657.3,550.0 655.2,551.4 653.3,552.9 651.3,554.3 649.3,555.7 647.3,557.2 645.2,558.7 643.1,560.2 640.8,561.8 638.4,563.4 634.8,565.9 631.0,568.5 627.0,571.3 622.8,574.1 618.5,577.0 614.0,580.0 609.5,583.0 604.9,586.1 600.2,589.2 595.6,592.3 590.0,596.0 584.4,599.7 578.6,603.5 572.6,607.4 566.6,611.3 560.5,615.3 554.3,619.4 548.0,623.7 541.7,628.0 535.3,632.5 527.9,637.9 520.1,643.6 512.3,649.6 504.3,655.7 496.3,661.9 488.4,668.1 480.6,674.1 473.1,679.9 465.9,685.5 459.2,690.6 454.3,694.2 449.7,697.7 445.1,701.0 440.7,704.2 436.3,707.4 432.0,710.5 427.7,713.7 423.5,717.0 419.2,720.3 414.9,723.8 410.7,727.3 406.7,730.8 402.8,734.2 398.9,737.6 395.0,741.1 391.1,744.8 387.1,748.6 383.0,752.6 378.7,756.9 374.2,761.5 367.1,769.0 359.7,777.2 352.0,785.9 344.0,795.2 335.8,804.7 327.5,814.5 319.1,824.4 310.7,834.3 302.3,844.1 294.0,853.7 285.0,863.9 275.9,874.3 266.7,884.7 257.3,895.2 248.0,905.8 238.6,916.4 229.2,927.0 219.7,937.6 210.3,948.2 201.0,958.7" fill="#abacae" />
<polyline points="204.0,961.3 213.3,950.8 222.7,940.2 232.1,929.6 241.6,919.0 251.0,908.4 260.3,897.9 269.7,887.4 278.9,876.9 288.0,866.6 297.0,856.4 305.3,846.8 313.8,836.9 322.2,827.0 330.6,817.1 338.9,807.3 347.0,797.8 355.0,788.6 362.7,779.8 370.1,771.7 377.1,764.2 381.6,759.7 385.8,755.4 389.9,751.4 393.9,747.7 397.7,744.1 401.6,740.6 405.4,737.2 409.3,733.8 413.3,730.4 417.4,726.9 421.7,723.5 425.9,720.1 430.1,716.9 434.4,713.7 438.7,710.6 443.0,707.4 447.5,704.2 452.0,700.9 456.7,697.5 461.6,693.8 468.4,688.6 475.6,683.1 483.1,677.3 490.8,671.2 498.7,665.1 506.7,658.9 514.7,652.8 522.5,646.8 530.2,641.1 537.7,635.7 544.0,631.3 550.3,627.0 556.5,622.8 562.7,618.7 568.8,614.7 574.8,610.7 580.7,606.9 586.5,603.1 592.2,599.4 597.8,595.7 602.4,592.6 607.1,589.4 611.7,586.4 616.2,583.3 620.7,580.3 625.0,577.4 629.2,574.6 633.3,571.8 637.1,569.2 640.7,566.7 643.1,565.0 645.4,563.4 647.5,561.9 649.6,560.4 651.6,559.0 653.6,557.5 655.6,556.1 657.6,554.7 659.6,553.2 661.7,551.7" fill="none" stroke="#c6c7c9" stroke-width="1.2" stroke-linecap="round" stroke-linejoin="round" />
<polyline points="201.0,958.7 210.3,948.2 219.7,937.6 229.2,927.0 238.6,916.4 248.0,905.8 257.3,895.2 266.7,884.7 275.9,874.3 285.0,863.9 294.0,853.7 302.3,844.1 310.7,834.3 319.1,824.4 327.5,814.5 335.8,804.7 344.0,795.2 352.0,785.9 359.7,777.2 367.1,769.0 374.2,761.5 378.7,756.9 383.0,752.6 387.1,748.6 391.1,744.8 395.0,741.1 398.9,737.6 402.8,734.2 406.7,730.8 410.7,727.3 414.9,723.8 419.2,720.3 423.5,717.0 427.7,713.7 432.0,710.5 436.3,707.4 440.7,704.2 445.1,701.0 449.7,697.7 454.3,694.2 459.2,690.6 465.9,685.5 473.1,679.9 480.6,674.1 488.4,668.1 496.3,661.9 504.3,655.7 512.3,649.6 520.1,643.6 527.9,637.9 535.3,632.5 541.7,628.0 548.0,623.7 554.3,619.4 560.5,615.3 566.6,611.3 572.6,607.4 578.6,603.5 584.4,599.7 590.0,596.0 595.6,592.3 600.2,589.2 604.9,586.1 609.5,583.0 614.0,580.0 618.5,577.0 622.8,574.1 627.0,571.3 631.0,568.5 634.8,565.9 638.4,563.4 640.8,561.8 643.1,560.2 645.2,558.7 647.3,557.2 649.3,555.7 651.3,554.3 653.3,552.9 655.2,551.4 657.3,550.0 659.3,548.5" fill="none" stroke="#8a8b8d" stroke-width="0.8" stroke-linecap="round" stroke-linejoin="round" />
<polyline points="207.0,964.0 216.3,953.5 225.7,942.9 235.1,932.3 244.6,921.7 254.0,911.1 263.3,900.5 272.6,890.0 281.9,879.6 291.0,869.2 300.0,859.0 308.4,849.4 316.8,839.5 325.2,829.6 333.6,819.7 341.9,809.9 350.1,800.4 358.0,791.2 365.7,782.5 373.0,774.4 380.0,767.0 384.4,762.5 388.6,758.3 392.7,754.3 396.6,750.6 400.4,747.0 404.2,743.6 408.1,740.2 411.9,736.8 415.9,733.4 420.0,730.0 424.2,726.6 428.4,723.3 432.5,720.1 436.8,717.0 441.0,713.8 445.4,710.7 449.8,707.5 454.4,704.1 459.1,700.7 464.0,697.0 470.8,691.8 478.0,686.3 485.5,680.4 493.3,674.4 501.2,668.2 509.2,662.1 517.1,656.0 524.9,650.0 532.6,644.4 540.0,639.0 546.3,634.6 552.5,630.3 558.7,626.1 564.9,622.0 571.0,618.0 577.0,614.1 582.9,610.2 588.7,606.4 594.4,602.7 600.0,599.0 604.7,595.9 609.3,592.8 613.9,589.7 618.5,586.6 622.9,583.7 627.3,580.7 631.5,577.9 635.5,575.1 639.4,572.5 643.0,570.0 645.4,568.3 647.7,566.7 649.9,565.2 652.0,563.7 654.0,562.2 656.0,560.8 657.9,559.4 659.9,557.9 661.9,556.5 664.0,555.0" fill="none" stroke="#4c4c4c" stroke-width="0.7" stroke-linecap="round" stroke-linejoin="round" />
<polyline points="130.0,902.0 207.0,964.0" fill="none" stroke="#6a6b6d" stroke-width="1.0" stroke-linecap="round" stroke-linejoin="round" />
<polygon points="615.6,471.9 634.6,445.7 661.1,418.0 740.6,370.6 748.7,368.5 761.0,372.6 821.0,454.0 816.0,466.3 769.0,503.0 751.8,509.0 730.4,523.4 731.4,535.6 708.0,549.9 702.9,543.7 685.0,543.7 669.0,547.4 661.9,549.4" fill="#a5a6a8" stroke="#4c4c4c" stroke-width="0.8" stroke-linejoin="round" />
<polygon points="585.5,481.0 610.0,467.0 615.6,471.9 618.5,477.0 592.0,491.0" fill="#b0b1b3" stroke="#4c4c4c" stroke-width="0.6" stroke-linejoin="round" />
<polygon points="661.9,549.4 665.5,556.0 644.5,571.5 641.0,571.4 639.0,566.5 657.0,555.0" fill="#b0b1b3" stroke="#4c4c4c" stroke-width="0.6" stroke-linejoin="round" />
<polyline points="615.6,471.9 629.4,496.2" fill="none" stroke="#5a5a5a" stroke-width="0.9" stroke-linecap="round" stroke-linejoin="round" />
<polyline points="647.0,527.0 661.9,549.4" fill="none" stroke="#5a5a5a" stroke-width="0.9" stroke-linecap="round" stroke-linejoin="round" />
<polygon points="615.6,471.9 629.4,496.2 633.0,494.0 620.0,470.5" fill="#8e8f91" />
<polygon points="634.6,430.1 661.1,418.0 667.6,421.5 668.3,426.6 641.8,439.2" fill="#adaeb0" stroke="#4c4c4c" stroke-width="0.7" stroke-linejoin="round" />
<polygon points="643.2,444.9 665.2,421.9 692.1,409.3 715.1,451.0 663.2,479.2" fill="#78797b" />
<polygon points="643.2,444.9 665.2,421.9 671.7,438.2 649.3,462.7" fill="#4e4e4e" />
<polygon points="665.2,421.9 692.1,409.3 695.8,415.8 669.3,429.6" fill="#5a5a5a" />
<polygon points="692.1,409.3 715.1,451.0 711.7,453.3 689.6,413.3" fill="#8a8b8d" />
<polyline points="643.2,444.9 665.2,421.9 692.1,409.3" fill="none" stroke="#3e3e3e" stroke-width="1.0" stroke-linecap="round" stroke-linejoin="round" />
<path d="M637.1 456.5 Q640.7 437.8 659.5 425.2" fill="none" stroke="#3a3a3a" stroke-width="1.7"/>
<path d="M617 527.500 L668 491" fill="none" stroke="#505050" stroke-width="29.5"/>
<path d="M617 527.500 L668 491" fill="none" stroke="#808183" stroke-width="28"/>
<path d="M616.500 526.500 L667.500 490" fill="none" stroke="#939496" stroke-width="24"/>
<path d="M615.800 525.300 L666.800 488.800" fill="none" stroke="#a0a1a3" stroke-width="18"/>
<path d="M615 524 L666 487.500" fill="none" stroke="#abacae" stroke-width="11"/>
<path d="M614.500 523 L665.500 486.500" fill="none" stroke="#b4b5b7" stroke-width="4.5"/>
<polyline points="609.0,514.5 625.0,538.5" fill="none" stroke="#555" stroke-width="1.0" stroke-linecap="round" stroke-linejoin="round" />
<path d="M668 491 L722 463" fill="none" stroke="#4c4c4c" stroke-width="31"/>
<path d="M668 491 L722 463" fill="none" stroke="#8e8f91" stroke-width="29.5"/>
<polyline points="662.9,477.1 676.1,503.5" fill="none" stroke="#565656" stroke-width="1.9" stroke-linecap="round" stroke-linejoin="round" />
<polyline points="664.8,476.2 678.0,502.6" fill="none" stroke="#b8b9bb" stroke-width="1.3" stroke-linecap="round" stroke-linejoin="round" />
<polyline points="667.8,474.5 681.0,500.9" fill="none" stroke="#565656" stroke-width="1.9" stroke-linecap="round" stroke-linejoin="round" />
<polyline points="669.7,473.6 682.9,500.0" fill="none" stroke="#b8b9bb" stroke-width="1.3" stroke-linecap="round" stroke-linejoin="round" />
<polyline points="672.7,472.0 685.9,498.4" fill="none" stroke="#565656" stroke-width="1.9" stroke-linecap="round" stroke-linejoin="round" />
<polyline points="674.6,471.1 687.8,497.5" fill="none" stroke="#b8b9bb" stroke-width="1.3" stroke-linecap="round" stroke-linejoin="round" />
<polyline points="677.6,469.4 690.8,495.8" fill="none" stroke="#565656" stroke-width="1.9" stroke-linecap="round" stroke-linejoin="round" />
<polyline points="679.5,468.5 692.7,494.9" fill="none" stroke="#b8b9bb" stroke-width="1.3" stroke-linecap="round" stroke-linejoin="round" />
<polyline points="682.5,466.9 695.7,493.3" fill="none" stroke="#565656" stroke-width="1.9" stroke-linecap="round" stroke-linejoin="round" />
<polyline points="684.4,466.0 697.6,492.4" fill="none" stroke="#b8b9bb" stroke-width="1.3" stroke-linecap="round" stroke-linejoin="round" />
<polyline points="687.4,464.3 700.6,490.7" fill="none" stroke="#565656" stroke-width="1.9" stroke-linecap="round" stroke-linejoin="round" />
<polyline points="689.3,463.4 702.5,489.8" fill="none" stroke="#b8b9bb" stroke-width="1.3" stroke-linecap="round" stroke-linejoin="round" />
<polyline points="692.3,461.8 705.5,488.2" fill="none" stroke="#565656" stroke-width="1.9" stroke-linecap="round" stroke-linejoin="round" />
<polyline points="694.2,460.9 707.4,487.3" fill="none" stroke="#b8b9bb" stroke-width="1.3" stroke-linecap="round" stroke-linejoin="round" />
<polyline points="697.2,459.2 710.4,485.6" fill="none" stroke="#565656" stroke-width="1.9" stroke-linecap="round" stroke-linejoin="round" />
<polyline points="699.1,458.3 712.3,484.7" fill="none" stroke="#b8b9bb" stroke-width="1.3" stroke-linecap="round" stroke-linejoin="round" />
<polyline points="702.1,456.7 715.3,483.1" fill="none" stroke="#565656" stroke-width="1.9" stroke-linecap="round" stroke-linejoin="round" />
<polyline points="704.0,455.8 717.2,482.2" fill="none" stroke="#b8b9bb" stroke-width="1.3" stroke-linecap="round" stroke-linejoin="round" />
<polyline points="707.0,454.1 720.2,480.5" fill="none" stroke="#565656" stroke-width="1.9" stroke-linecap="round" stroke-linejoin="round" />
<polyline points="708.9,453.2 722.1,479.6" fill="none" stroke="#b8b9bb" stroke-width="1.3" stroke-linecap="round" stroke-linejoin="round" />
<polyline points="711.9,451.6 725.1,478.0" fill="none" stroke="#565656" stroke-width="1.9" stroke-linecap="round" stroke-linejoin="round" />
<polyline points="713.8,450.7 727.0,477.1" fill="none" stroke="#b8b9bb" stroke-width="1.3" stroke-linecap="round" stroke-linejoin="round" />
<polyline points="679.5,504.0 692.7,529.5" fill="none" stroke="#8a8b8d" stroke-width="0.7" stroke-linecap="round" stroke-linejoin="round" />
<polyline points="705.9,491.8 724.3,523.4" fill="none" stroke="#8c8d8f" stroke-width="0.8" stroke-linecap="round" stroke-linejoin="round" />
<polyline points="730.4,523.4 731.4,535.6 708.0,549.9 702.9,543.7" fill="none" stroke="#6a6b6d" stroke-width="0.7" stroke-linecap="round" stroke-linejoin="round" />
<polygon points="692.7,409.3 756.9,373.6 811.9,467.3 751.8,509.1" fill="url(#gCyl)" stroke="#4c4c4c" stroke-width="0.8" stroke-linejoin="round" />
<polygon points="692.7,409.3 756.9,373.6 811.9,467.3 751.8,509.1" fill="url(#gCylV)" />
<polygon points="756.9,373.6 773.2,368.5 819.0,445.9 821.7,453.1 819.0,460.2 811.9,467.3" fill="#858688" stroke="#4c4c4c" stroke-width="0.8" stroke-linejoin="round" />
<polygon points="756.9,373.6 773.2,368.5 819.0,445.9 821.7,453.1 819.0,460.2 811.9,467.3" fill="url(#gCylV)" />
<polygon points="800.7,445.9 811.9,467.3 819.0,460.2 821.7,453.1 816.0,441.9" fill="#000" opacity="0.22"/>
<polyline points="770.1,370.6 818.0,454.1" fill="none" stroke="#a8a9ab" stroke-width="1.2" stroke-linecap="round" stroke-linejoin="round" />
<polyline points="759.5,374.2 813.1,465.9" fill="none" stroke="#a4a5a7" stroke-width="1.0" stroke-linecap="round" stroke-linejoin="round" />
<circle cx="774.2" cy="387.3" r="1.2" fill="#333"/>
<polygon points="665.2,418.0 740.6,370.6 747.7,368.5 761.0,372.6 756.9,374.6 742.6,375.0 692.7,408.3 670.3,422.5" fill="#a9aaac" stroke="#4c4c4c" stroke-width="0.7" stroke-linejoin="round" />
<polyline points="661.1,418.4 730.4,374.6 742.6,368.5 754.8,370.6 763.0,372.6" fill="none" stroke="#555" stroke-width="3.6" stroke-linecap="round" stroke-linejoin="round" />
<polyline points="661.1,418.4 730.4,374.6 742.6,368.5 754.8,370.6 763.0,372.6" fill="none" stroke="#b8b9bb" stroke-width="2.2" stroke-linecap="round" stroke-linejoin="round" />
<path d="M763 371 Q760 340 790 318 L798 312" fill="none" stroke="#555" stroke-width="2.4"/>
<path d="M763 371 Q760 340 790 318 L798 312" fill="none" stroke="#b0b1b3" stroke-width="1.2"/>
<path d="M683.5 535.6 L685.5 536.2 L687.5 536.9 L689.5 537.5 L691.5 538.1 L693.6 538.5 L695.8 538.7 L698.6 538.4 L701.5 537.9 L704.5 537.0 L707.6 536.0 L710.8 534.8 L714.1 533.6 L718.6 531.7 L723.3 529.5 L728.1 527.1 L733.0 524.5 L737.9 521.9 L742.6 519.3 L747.1 516.9 L751.4 514.4 L755.7 512.0 L760.0 509.4 L764.4 506.8 L769.1 504.0 L775.5 500.3 L782.5 496.3 L789.7 492.2 L796.6 488.1 L802.8 484.2 L807.8 480.6 L810.1 478.8 L812.3 477.1 L814.2 475.5 L815.8 473.9 L817.1 472.2 L818.0 470.4 L818.4 468.8 L818.5 467.1 L818.3 465.4 L818.0 463.7 L817.8 461.9 L817.6 460.2" fill="none" stroke="#505050" stroke-width="4.2"/>
<path d="M683.5 535.6 L685.5 536.2 L687.5 536.9 L689.5 537.5 L691.5 538.1 L693.6 538.5 L695.8 538.7 L698.6 538.4 L701.5 537.9 L704.5 537.0 L707.6 536.0 L710.8 534.8 L714.1 533.6 L718.6 531.7 L723.3 529.5 L728.1 527.1 L733.0 524.5 L737.9 521.9 L742.6 519.3 L747.1 516.9 L751.4 514.4 L755.7 512.0 L760.0 509.4 L764.4 506.8 L769.1 504.0 L775.5 500.3 L782.5 496.3 L789.7 492.2 L796.6 488.1 L802.8 484.2 L807.8 480.6 L810.1 478.8 L812.3 477.1 L814.2 475.5 L815.8 473.9 L817.1 472.2 L818.0 470.4 L818.4 468.8 L818.5 467.1 L818.3 465.4 L818.0 463.7 L817.8 461.9 L817.6 460.2" fill="none" stroke="#b6b7b9" stroke-width="2.6"/>
<path d="M682.5 535.2 L689.6 538.7 L695.8 541.7" fill="none" stroke="#333" stroke-width="1.5"/>
<polygon points="767.1,503.0 822.1,472.4 842.5,466.3 847.6,470.4 830.2,486.7 775.2,515.2" fill="#aaabad" stroke="#4c4c4c" stroke-width="0.7" stroke-linejoin="round" />
<polyline points="775.2,515.2 830.2,486.7" fill="none" stroke="#8a8b8d" stroke-width="0.7" stroke-linecap="round" stroke-linejoin="round" />
<polygon points="824.1,451.0 837.4,445.9 847.6,465.3 842.5,468.4" fill="#606163" />
<polygon points="824.1,451.0 837.4,445.9 839.4,450.0 826.6,455.7" fill="#8a8b8d" />
</svg>
<!-- ===== viewport header (left) ===== -->
<div class="btn" style="left:12px;top:67px;width:38px;height:22px"></div>
<svg style="left:15px;top:68px" width="34" height="20" viewBox="0 0 34 20">
  <g stroke="#e0e0e0" stroke-width="1.3" fill="none" stroke-linecap="round"><path d="M3 12.5H19M2.5 16.5H20M8 9L6 19M15.5 13L16.5 19"/></g>
  <circle cx="15.5" cy="6" r="4.6" fill="#e6e6e6"/><circle cx="14.3" cy="4.8" r="2" fill="#fff"/><path d="M12.5 9.2a4.6 4.6 0 0 0 6.8-.4" stroke="#8a8a8a" stroke-width="1.2" fill="none"/>
  <path d="M24.5 8.5l3.2 3.2 3.2-3.2" stroke="#e0e0e0" stroke-width="1.4" fill="none" stroke-linecap="round" stroke-linejoin="round"/>
</svg>
<div class="btn" style="left:58px;top:67px;width:135px;height:22px"></div>
<svg style="left:62px;top:69px" width="20" height="18" viewBox="0 0 20 18">
  <path d="M1 5V1.2H5M15 1.2H19V5M19 13V16.8H15M5 16.8H1V13" stroke="#d8d8d8" stroke-width="1.3" fill="none"/>
  <rect x="4.6" y="4" width="10.8" height="10" rx="0.8" fill="#e8e8e8"/>
</svg>
<div class="t" style="left:90px;top:71.5px;color:#e6e6e6">Object Mode</div>
<svg style="left:181px;top:74px" width="10" height="8" viewBox="0 0 10 8"><path d="M1.3 1.8l3.7 3.7 3.7-3.7" stroke="#e0e0e0" stroke-width="1.4" fill="none" stroke-linecap="round" stroke-linejoin="round"/></svg>
<div class="t menu" style="left:209px;top:71.5px">View</div>
<div class="t menu" style="left:259px;top:71.5px">Select</div>
<div class="t menu" style="left:317px;top:71.5px">Add</div>
<div class="t menu" style="left:361px;top:71.5px">Object</div>

<!-- selection mode strip -->
<div class="abs" style="left:55px;top:100px;width:119px;height:23px;background:#545454;border-radius:4px;overflow:hidden">
  <div class="abs" style="left:24px;top:0;width:23.5px;height:23px;background:#4772b3"></div>
  <div class="abs" style="left:23.5px;top:0;width:1px;height:23px;background:#3e3e3e"></div>
  <div class="abs" style="left:47px;top:0;width:1px;height:23px;background:#3e3e3e"></div>
  <div class="abs" style="left:71px;top:0;width:1px;height:23px;background:#444"></div>
  <div class="abs" style="left:95px;top:0;width:1px;height:23px;background:#444"></div>
</div>
<svg style="left:55px;top:100px" width="119" height="23" viewBox="0 0 119 23">
  <rect x="3.8" y="3.8" width="15.6" height="15.4" fill="none" stroke="#e4e4e4" stroke-width="1.2" stroke-dasharray="3 2.2"/>
  <rect x="32.5" y="3" width="12" height="12" fill="#fff"/><rect x="27" y="8.7" width="12" height="11.3" fill="#fff"/>
  <rect x="51.5" y="8.7" width="11" height="11" fill="none" stroke="#d8d8d8" stroke-width="1.1" stroke-dasharray="2.6 2"/>
  <path d="M56.5 3h12v12h-5.5v-6.3h-6.5z" fill="#d0d0d0"/>
  <path d="M75.5 8.7h5V3h12v12h-5.5v5h-11.5z" fill="#d0d0d0"/><rect x="80.5" y="8.7" width="6.5" height="6.3" fill="#464646"/>
  <rect x="99.8" y="3.6" width="15.6" height="15.8" fill="none" stroke="#d8d8d8" stroke-width="1.2" stroke-dasharray="3 2.2"/>
  <rect x="104.3" y="8" width="7" height="7" fill="#d0d0d0"/>
</svg>

<!-- ===== viewport header (center) ===== -->
<div class="btn" style="left:803px;top:67px;width:99px;height:22px"></div>
<svg style="left:807px;top:68px" width="22" height="20" viewBox="0 0 22 20">
  <g stroke="#dcdcdc" stroke-width="1.2" fill="none" stroke-linecap="round" stroke-linejoin="round">
    <path d="M4 14.5V3M1.8 5.2L4 2.6 6.2 5.2M4.5 15.5H18M15.8 13.2L18.4 15.5 15.8 17.8M5 14.2L12 6.5M9 6.2L12.3 6.2 12.3 9.6"/>
    <circle cx="4" cy="15.5" r="1.7"/>
  </g>
</svg>
<div class="t" style="left:836px;top:71.5px;color:#e6e6e6">Global</div>
<svg style="left:889px;top:74px" width="10" height="8" viewBox="0 0 10 8"><path d="M1.3 1.8l3.7 3.7 3.7-3.7" stroke="#e0e0e0" stroke-width="1.4" fill="none" stroke-linecap="round" stroke-linejoin="round"/></svg>
<div class="btn" style="left:910px;top:67px;width:37px;height:22px"></div>
<svg style="left:913px;top:69px" width="34" height="18" viewBox="0 0 34 18">
  <path d="M1.5 5V1.5H5M15 1.5H18.5V5M18.5 13V16.5H15M5 16.5H1.5V13" stroke="#dcdcdc" stroke-width="1.3" fill="none"/>
  <circle cx="10" cy="9" r="2.4" fill="#e8e8e8"/>
  <path d="M24 7l3.3 3.3 3.3-3.3" stroke="#e0e0e0" stroke-width="1.4" fill="none" stroke-linecap="round" stroke-linejoin="round"/>
</svg>
<div class="abs" style="left:956px;top:67px;width:62px;height:22px;background:#282828;border-radius:4px;overflow:hidden"><div class="abs" style="left:0;top:0;width:23px;height:22px;background:#545454"></div></div>
<svg style="left:956px;top:67px" width="62" height="22" viewBox="0 0 62 22">
  <path d="M5.2 8.6A6 6 0 1 1 16 14.6L12.6 18M8.6 10.6A2.6 2.6 0 1 1 13 13L10 16" stroke="#a8a8a8" stroke-width="1.4" fill="none" stroke-linecap="round"/>
  <path d="M4.2 7.8l2.6 2.2M7.4 9.6l2.2 2" stroke="#a8a8a8" stroke-width="1.2"/>
  <g fill="#e6e6e6"><rect x="29" y="4.5" width="4.6" height="4.6"/><rect x="37" y="4.5" width="4.6" height="4.6"/><rect x="29" y="12.5" width="4.6" height="4.6"/><rect x="37" y="12.5" width="4.6" height="4.6"/></g>
  <path d="M49.5 9.2l3.3 3.3 3.3-3.3" stroke="#e0e0e0" stroke-width="1.4" fill="none" stroke-linecap="round" stroke-linejoin="round"/>
</svg>
<div class="abs" style="left:1026px;top:67px;width:63px;height:22px;background:#2c2c2c;border-radius:4px;overflow:hidden"><div class="abs" style="left:0;top:0;width:24.5px;height:22px;background:#545454"></div></div>
<svg style="left:1026px;top:67px" width="63" height="22" viewBox="0 0 63 22">
  <circle cx="12.3" cy="11" r="6.6" fill="none" stroke="#8c8c8c" stroke-width="1.3"/><circle cx="12.3" cy="11" r="2.3" fill="#a4a4a4"/>
  <path d="M30 17.5C36 17.5 35.5 4.5 39 4.5S42 17.5 48 17.5" stroke="#b0b0b0" stroke-width="1.3" fill="none" stroke-linecap="round"/>
  <path d="M52.5 9.4l3 3 3-3" stroke="#5c5c5c" stroke-width="1.4" fill="none" stroke-linecap="round" stroke-linejoin="round"/>
</svg>
<!-- ===== viewport header (right) ===== -->
<div class="btn" style="left:1600px;top:67px;width:37px;height:22px"></div>
<svg style="left:1601px;top:67px" width="36" height="22" viewBox="0 0 36 22">
  <path d="M8 6.8C11 2.6 17 2.6 20 6.8 17 11 11 11 8 6.8Z" fill="#e8e8e8"/><circle cx="14" cy="6.8" r="2.5" fill="#282828"/><circle cx="14" cy="6.8" r="1.1" fill="#e8e8e8"/>
  <path d="M2.5 9.5L12 12.5 8.3 14.3 6.2 19.5Z" fill="#e8e8e8"/>
  <path d="M25 9.4l3.3 3.3 3.3-3.3" stroke="#e0e0e0" stroke-width="1.4" fill="none" stroke-linecap="round" stroke-linejoin="round"/>
</svg>
<div class="abs" style="left:1646px;top:67px;width:47px;height:22px;background:#282828;border-radius:4px;overflow:hidden"><div class="abs" style="left:0;top:0;width:23.5px;height:22px;background:#4772b3"></div></div>
<svg style="left:1646px;top:67px" width="47" height="22" viewBox="0 0 47 22">
  <g stroke="#fff" stroke-width="1.3" fill="none" stroke-linecap="round" stroke-linejoin="round"><circle cx="5.8" cy="16.2" r="2"/><path d="M7.4 14.8L18 4.2M13.6 3.8H18.4V8.6M3.5 8.5C10 8.5 14.5 12 15 19"/></g>
  <path d="M31.5 9.4l3.3 3.3 3.3-3.3" stroke="#e0e0e0" stroke-width="1.4" fill="none" stroke-linecap="round" stroke-linejoin="round"/>
</svg>
<div class="abs" style="left:1702px;top:67px;width:47px;height:22px;background:#2b2b2b;border-radius:4px;overflow:hidden"><div class="abs" style="left:0;top:0;width:23.5px;height:22px;background:#545454"></div></div>
<svg style="left:1702px;top:67px" width="47" height="22" viewBox="0 0 47 22">
  <circle cx="13.5" cy="9.3" r="5.6" fill="#e0e0e0"/><circle cx="9.6" cy="12.6" r="5.3" fill="none" stroke="#dcdcdc" stroke-width="1.3"/>
  <path d="M9 8.5a5.6 5.6 0 0 0 5 6.3" stroke="#545454" stroke-width="1.2" fill="none"/>
  <path d="M32 9.4l3 3 3-3" stroke="#585858" stroke-width="1.4" fill="none" stroke-linecap="round" stroke-linejoin="round"/>
</svg>
<div class="btn2" style="left:1758px;top:67px;width:23.5px;height:22px;border-radius:4px"></div>
<svg style="left:1758px;top:67px" width="24" height="22" viewBox="0 0 24 22">
  <path d="M7.5 6.5V3.5H20V16H17" stroke="#d8d8d8" stroke-width="1.2" fill="none"/><rect x="4" y="6.8" width="12.6" height="12.2" fill="none" stroke="#d8d8d8" stroke-width="1.3"/>
  <path d="M10.3 9.5V14M8 16.2H9.6M11 16.2H12.6" stroke="#d8d8d8" stroke-width="1.1"/>
</svg>
<div class="abs" style="left:1789px;top:67px;width:119px;height:22px;background:#282828;border-radius:4px;overflow:hidden"><div class="abs" style="left:0;top:0;width:95px;height:22px;background:#545454"></div><div class="abs" style="left:24px;top:0;width:23.5px;height:22px;background:#4772b3"></div>
 <div class="abs" style="left:47.5px;top:0;width:1px;height:22px;background:#444"></div><div class="abs" style="left:71px;top:0;width:1px;height:22px;background:#444"></div></div>
<svg style="left:1789px;top:67px" width="119" height="22" viewBox="0 0 119 22">
  <g stroke="#d0d0d0" stroke-width="1.2" fill="none"><circle cx="12" cy="11" r="7"/><ellipse cx="12" cy="11" rx="3.2" ry="7"/><path d="M5 11H19M6 7.3H18M6 14.7H18"/></g>
  <circle cx="35.7" cy="11" r="7.4" fill="#fff"/>
  <circle cx="59.5" cy="11" r="7" fill="none" stroke="#d0d0d0" stroke-width="1.2"/><path d="M59.5 4A7 7 0 0 0 59.5 18V11H66.5A7 7 0 0 0 59.5 4Z" fill="#d0d0d0"/><path d="M59.5 11H66.3A7 7 0 0 1 59.5 18Z" fill="#8a8a8a" opacity=".6"/>
  <circle cx="83" cy="11" r="7" fill="none" stroke="#d0d0d0" stroke-width="1.2"/><circle cx="83" cy="11" r="4.6" fill="none" stroke="#d0d0d0" stroke-width="1" stroke-dasharray="1.3 1.3"/><circle cx="80.5" cy="8.6" r="2.2" fill="#e0e0e0"/>
  <path d="M103.5 9.4l3.3 3.3 3.3-3.3" stroke="#e0e0e0" stroke-width="1.4" fill="none" stroke-linecap="round" stroke-linejoin="round"/>
</svg>
<div class="btn" style="left:1831px;top:100px;width:79px;height:22px;background:#2b2b2b"></div>
<div class="t" style="left:1840px;top:104.5px;color:#e6e6e6">Options</div>
<svg style="left:1896px;top:107px" width="10" height="8" viewBox="0 0 10 8"><path d="M1.3 1.8l3.5 3.5 3.5-3.5" stroke="#e0e0e0" stroke-width="1.4" fill="none" stroke-linecap="round" stroke-linejoin="round"/></svg>
<!-- sidebar arrow -->
<div class="abs" style="left:1909px;top:143px;width:9px;height:20px;background:#2e2e2e;border-radius:4px 0 0 4px"></div>
<svg style="left:1910px;top:147px" width="8" height="12" viewBox="0 0 8 12"><path d="M6 1.5L2 6l4 4.5" stroke="#d0d0d0" stroke-width="1.3" fill="none" stroke-linecap="round" stroke-linejoin="round"/></svg>

<!-- ===== top bar scene / view layer ===== -->
<div class="abs" style="left:1425px;top:33px;width:240px;height:24px;background:#1d1d1d;border:1px solid #3a3a3a;border-radius:4px;overflow:hidden">
  <div class="abs" style="left:0;top:0;width:38px;height:22px;background:#282828"></div>
  <div class="abs" style="left:38px;top:0;width:1px;height:22px;background:#3a3a3a"></div>
  <div class="abs" style="left:188px;top:0;width:25px;height:22px;background:#545454"></div>
  <div class="abs" style="left:213px;top:0;width:26px;height:22px;background:#3a3a3a"></div>
</div>
<svg style="left:1425px;top:33px" width="240" height="24" viewBox="0 0 240 24">
  <path d="M8.5 17.5L12 5.5 15.8 17.5Q12 19.5 8.5 17.5Z" fill="#d0d0d0"/><circle cx="22" cy="7" r="2.6" fill="#d8d8d8"/><circle cx="15" cy="8" r="1.4" fill="#d8d8d8"/><circle cx="19" cy="16.5" r="4" fill="#282828" stroke="#d8d8d8" stroke-width="1.3"/>
  <path d="M28.5 10.5l3.2 3.2 3.2-3.2" stroke="#e0e0e0" stroke-width="1.4" fill="none" stroke-linecap="round" stroke-linejoin="round"/>
  <g stroke="#8c8c8c" stroke-width="1.2" fill="none" stroke-linejoin="round"><path d="M175.5 4.5l5.5 5.5-2 .8-2.2 3.6-5.2-5.2 3.6-2.2zM174 13l-5.6 6.4"/></g>
  <g stroke="#c8c8c8" stroke-width="1.2" fill="none"><path d="M197 8.5V5h8l3.5 3.5V17H205"/><path d="M204.5 5v4h4"/><rect x="193.5" y="8.5" width="10.5" height="11"/></g>
  <path d="M221.5 8l7.5 7.5M229 8l-7.5 7.5" stroke="#6c6c6c" stroke-width="1.3" stroke-linecap="round"/>
</svg>
<div class="t" style="left:1473px;top:38.5px;color:#e6e6e6">Scene</div>
<div class="abs" style="left:1671px;top:33px;width:240px;height:24px;background:#1d1d1d;border:1px solid #3a3a3a;border-radius:4px;overflow:hidden">
  <div class="abs" style="left:0;top:0;width:38px;height:22px;background:#282828"></div>
  <div class="abs" style="left:38px;top:0;width:1px;height:22px;background:#3a3a3a"></div>
  <div class="abs" style="left:188px;top:0;width:25px;height:22px;background:#545454"></div>
  <div class="abs" style="left:213px;top:0;width:26px;height:22px;background:#3a3a3a"></div>
</div>
<svg style="left:1671px;top:33px" width="240" height="24" viewBox="0 0 240 24">
  <g stroke="#d8d8d8" stroke-width="1.2" fill="none"><path d="M7 9V19H19M9.5 7V16.5H21.5"/><rect x="12" y="4.5" width="12" height="9.5" fill="#d8d8d8"/></g>
  <path d="M13 13l3.2-4.6 2.4 3 1.6-1.6 2.8 3.2z" fill="#282828"/><circle cx="21" cy="7.3" r="1.1" fill="#282828"/>
  <path d="M28.5 10.5l3.2 3.2 3.2-3.2" stroke="#e0e0e0" stroke-width="1.4" fill="none" stroke-linecap="round" stroke-linejoin="round"/>
  <g stroke="#c8c8c8" stroke-width="1.2" fill="none"><path d="M197 8.5V5h8l3.5 3.5V17H205"/><path d="M204.5 5v4h4"/><rect x="193.5" y="8.5" width="10.5" height="11"/></g>
  <path d="M221.5 8l7.5 7.5M229 8l-7.5 7.5" stroke="#6c6c6c" stroke-width="1.3" stroke-linecap="round"/>
</svg>
<div class="t" style="left:1719px;top:38.5px;color:#e6e6e6">ViewLayer</div>
<!-- ===== toolbar (left) ===== -->
<div class="abs" style="left:11px;top:136px;width:51px;height:85.5px;background:#2a2a2a;border-radius:5px;overflow:hidden"><div class="abs" style="left:0;top:0;width:51px;height:42.5px;background:#4772b3"></div></div>
<div class="abs" style="left:11px;top:229px;width:51px;height:170px;background:#2a2a2a;border-radius:5px"></div>
<div class="abs" style="left:11px;top:271px;width:51px;height:1px;background:#383838"></div>
<div class="abs" style="left:11px;top:313.5px;width:51px;height:1px;background:#383838"></div>
<div class="abs" style="left:11px;top:356px;width:51px;height:1px;background:#383838"></div>
<div class="abs" style="left:11px;top:407px;width:51px;height:84px;background:#2a2a2a;border-radius:5px"></div>
<div class="abs" style="left:11px;top:448.5px;width:51px;height:1px;background:#383838"></div>
<div class="abs" style="left:11px;top:499px;width:51px;height:42px;background:#2a2a2a;border-radius:5px"></div>
<svg style="left:11px;top:136px" width="51" height="406" viewBox="0 0 51 406">
  <!-- select box -->
  <rect x="10.800" y="8" width="26.800" height="26" rx="1" fill="none" stroke="#dcdcdc" stroke-width="1.800" stroke-dasharray="3.400 2.300"/>
  <path d="M20 13.800V28.400L23.300 25 29.800 23.200Z" fill="#e6ecf8"/>
  <path d="M48 34.5v5.5h-5.5z" fill="#9fb4d6"/>
  <!-- cursor -->
  <circle cx="23.800" cy="64" r="13.700" fill="none" stroke="#f4f4f4" stroke-width="2"/>
  <circle cx="23.800" cy="64" r="13.700" fill="none" stroke="#8c4a42" stroke-width="2" stroke-dasharray="4.300 4.300"/>
  <path d="M23.800 55.500v5.600M23.800 66.800v5.800M15 64h6M27 64h6" stroke="#a8a8a8" stroke-width="1.600"/>
  <!-- move -->
  <g transform="translate(24.5,113)" fill="#ececec" stroke="#ececec"><path d="M0 -14l4 5.5h-8zM0 14l4-5.5h-8zM-14 0l5.5-4v8zM14 0l-5.5-4v8z" stroke="none"/><path d="M0 -9v5M0 9v-5M-9 0h5M9 0h-5" stroke-width="1.6" stroke-dasharray="1.8 1.6"/></g>
  <!-- rotate -->
  <g transform="translate(24.5,156)"><path d="M-9.5 -7A12 12 0 0 1 9.5 -7M-9.5 7A12 12 0 0 0 9.5 7" stroke="#ececec" stroke-width="1.6" fill="none"/><path d="M-14 0.5l3.5-5.5 3.5 5.5zM14 -0.5l-3.5 5.5-3.5-5.5z" fill="#ececec" transform="rotate(180)"/><path d="M0 -5.2L5.2 0 0 5.2-5.2 0z" fill="#c8c8c8"/></g>
  <!-- scale -->
  <g transform="translate(11.5,186)"><rect x="9" y="1" width="18.5" height="18.5" fill="none" stroke="#ececec" stroke-width="1.6"/><rect x="0.5" y="11.5" width="16" height="16" fill="#ececec" stroke="#2a2a2a" stroke-width="1.2"/><path d="M16 12.5L23.5 5M18.5 4.5H24V10" stroke="#ececec" stroke-width="1.6" fill="none"/></g>
  <path d="M48 205v5.5h-5.5z" fill="#8c8c8c"/>
  <!-- transform -->
  <g transform="translate(24.5,242)"><circle r="11.6" fill="none" stroke="#ececec" stroke-width="1.5" stroke-dasharray="9.5 8.7" stroke-dashoffset="4.7" transform="rotate(45)"/><rect x="-5.8" y="-5.8" width="11.6" height="11.6" fill="#ececec"/><path d="M0 -14.5l3.6 5h-7.2zM0 14.5l3.6-5h-7.2zM-14.5 0l5-3.6v7.2zM14.5 0l-5-3.6v7.2z" fill="#ececec"/></g>
  <!-- annotate -->
  <g transform="translate(9,281)"><path d="M2 22.5C8 28 14 24 18 19.5S27 14 31 21" stroke="#8fd3b0" stroke-width="1.7" fill="none"/><path d="M4.5 21.5L7.5 13.5 23 -1.5 28.5 3.5 13 19z" fill="#ececec"/><path d="M21 1l5 5" stroke="#2a2a2a" stroke-width="1.3"/></g>
  <path d="M48 301v5.5h-5.5z" fill="#8c8c8c"/>
  <!-- measure -->
  <g transform="translate(12,322)"><path d="M6 12A17 17 0 0 1 23.5 29.5H6z" fill="#8fd3b0"/><path d="M2 1h4v28.5h21v4H2z" fill="#ececec"/><path d="M6 5h-2.5M6 9h-2.5M6 13h-2.5M6 17h-2.5M6 21h-2.5M6 25h-2.5M9 30v2.500M13 30v2.500M17 30v2.500M21 30v2.500M25 30v2.500" stroke="#2a2a2a" stroke-width="1"/></g>
  <!-- add cube -->
  <g transform="translate(7,368)"><path d="M2 6.500h11M7.500 1v11" stroke="#8fd3b0" stroke-width="2.6"/><g stroke="#8fd3b0" stroke-width="1.4" fill="none" stroke-linejoin="round"><path d="M12 16.500L19 11.500H36.500V28L29.500 33.500H12zM12 16.500H29.500V33.500M29.500 16.500L36.500 11.500"/></g></g>
  <path d="M48 397v5.500h-5.500z" fill="#8c8c8c"/>
</svg>

<!-- ===== gizmo ===== -->
<svg style="left:1800px;top:132px" width="120" height="112" viewBox="1800 132 120 112">
  <path d="M1856.700 158V218" stroke="#4a7dc4" stroke-width="2.200"/>
  <path d="M1827 188H1887" stroke="#c84a5a" stroke-width="2.200"/>
  <circle cx="1817" cy="188" r="9.500" fill="#7a4048" stroke="#c0485a" stroke-width="1.300"/>
  <circle cx="1856.700" cy="227.600" r="9.500" fill="#3f5f92" stroke="#4a7dc4" stroke-width="1.300"/>
  <circle cx="1856.700" cy="148" r="10" fill="#3f85e0"/>
  <circle cx="1897.400" cy="188" r="10" fill="#e2405a"/>
  <circle cx="1856.700" cy="188" r="11" fill="#8ed021"/>
  <text x="1856.700" y="152.300" font-family="DejaVu Sans,sans-serif" font-weight="bold" font-size="12" text-anchor="middle" fill="#0c2a55">Z</text>
  <text x="1897.400" y="192.400" font-family="DejaVu Sans,sans-serif" font-weight="bold" font-size="12" text-anchor="middle" fill="#4d0812">X</text>
  <text x="1856.700" y="192.400" font-family="DejaVu Sans,sans-serif" font-weight="bold" font-size="11.500" text-anchor="middle" fill="#1f4d05">-Y</text>
</svg>
<!-- nav buttons -->
<svg style="left:1870px;top:236px" width="44" height="152" viewBox="1870 236 44 152">
  <g fill="#333333"><circle cx="1891" cy="256" r="16.500"/><circle cx="1891" cy="293.500" r="16.500"/><circle cx="1891" cy="331.500" r="16.500"/><circle cx="1891" cy="369" r="16.500"/></g>
  <!-- zoom -->
  <circle cx="1893.500" cy="253.500" r="7.600" fill="#ececec"/><path d="M1888 259.500l-6 6" stroke="#ececec" stroke-width="3" stroke-linecap="round"/><path d="M1890 253.500h7M1893.500 250v7" stroke="#333" stroke-width="1.500"/>
  <!-- hand -->
  <path d="M1884 296c-1.500-2.500-3-5-2.500-6s2.500 0 4 2.500v-7.500c0-2 2.400-2 2.400 0v-2c0-2 2.600-2 2.600 0v1.500c0-2 2.600-2 2.600 0v2c0-1.800 2.400-1.800 2.400 0v9c0 4-2.500 7-6.500 7s-5.500-2.500-7-6.500z" fill="#ececec"/>
  <!-- camera -->
  <g fill="#ececec"><circle cx="1885" cy="326.500" r="4.200"/><circle cx="1894" cy="326" r="4.800"/><rect x="1882" y="331.500" width="14" height="8.500" rx="1"/><path d="M1896.500 335l6-3.500v9z"/></g><circle cx="1885" cy="326.500" r="1.400" fill="#333"/><circle cx="1894" cy="326" r="1.600" fill="#333"/>
  <!-- grid -->
  <g fill="none" stroke="#ececec" stroke-width="1.600"><rect x="1882" y="360" width="18" height="18"/><path d="M1888 360v18M1894 360v18M1882 366h18M1882 372h18"/></g>
</svg>

<!-- ===== status bar icons ===== -->
<svg style="left:0;top:1005px" width="640" height="25" viewBox="0 0 640 25">
  <g fill="none" stroke="#9a9a9a" stroke-width="1.300">
    <rect x="16.500" y="5.500" width="11.500" height="16" rx="4.500"/><rect x="297.500" y="5.500" width="11.500" height="16" rx="4.500"/><rect x="578.500" y="5.500" width="11.500" height="16" rx="4.500"/>
  </g>
  <path d="M16.500 12.500V10a4.500 4.500 0 0 1 4.500-4.500h1.200v7z" fill="#b0b0b0"/>
  <rect x="301.700" y="7.500" width="3.200" height="6" rx="1.500" fill="#b0b0b0"/>
  <path d="M590 12.500V10a4.500 4.500 0 0 0-4.500-4.500h-1.200v7z" fill="#b0b0b0"/>
</svg>
<div id="taskbar">
  <!-- start -->
  <svg style="left:20px;top:15px" width="20" height="20" viewBox="0 0 20 20"><path d="M0 2.800L8.200 1.700V9.500H0zM9.200 1.500L20 0V9.500H9.200zM0 10.500H8.200V18.300L0 17.200zM9.200 10.500H20V20L9.200 18.500z" fill="#000"/></svg>
  <div class="abs" style="left:61px;top:0;width:428px;height:50px;background:#fff"></div>
  <svg style="left:74px;top:13px" width="24" height="24" viewBox="0 0 24 24"><circle cx="14.300" cy="8.700" r="5.600" fill="none" stroke="#111" stroke-width="1.500"/><path d="M10.300 12.700L2.500 20.500" stroke="#111" stroke-width="1.600"/></svg>
  <div class="t" style="left:110.500px;top:16.500px;font-size:18.400px;color:#3a3a3a">Type here to search</div>
  <!-- pyramids -->
  <svg style="left:400px;top:0" width="89" height="50" viewBox="0 0 89 50">
    <path d="M0 50Q10 41 30 40L89 36V50Z" fill="#ecd2a4"/>
    <path d="M23 42L43 7 63 40Z" fill="#dcae74"/><path d="M43 7L63 40 50 42Z" fill="#b98852"/><path d="M40 12l3-5 3 5z" fill="#f4e3c2"/>
    <path d="M55 38L72 14 89 36V40Z" fill="#d8a86c"/><path d="M72 14L89 36 80 39Z" fill="#b07e4a"/>
    <path d="M2 48C3 38 5 30 9 26 14 24 18 28 17 33L19 38 25 42V48Z" fill="#caa06e"/><path d="M9 26c3-1 6 0 7 3l-1 5-5 1z" fill="#a97f50"/>
    <path d="M48 44l18-3 8 3-12 3z" fill="#d4ae7c"/>
  </svg>
  <!-- task view -->
  <svg style="left:508px;top:14px" width="24" height="22" viewBox="0 0 24 22"><g stroke="#111" stroke-width="1.400" fill="none"><rect x="3.500" y="5" width="11" height="10.500"/><path d="M1 2.500H16.500M1 18.500H16.500M20.500 1V5M20.500 8V13M20.500 16V20"/></g></svg>
  <!-- edge -->
  <svg style="left:568px;top:9px" width="32" height="32" viewBox="0 0 32 32">
    <circle cx="16" cy="16" r="15" fill="#2c8fd6"/><path d="M2 13C5 3 20 -1 28 8 31 13 30 18 24 19H13C13 14 18 12 21 14 19 8 8 8 2 13Z" fill="#49d0a8"/>
    <path d="M3 22C1 12 12 8 18 12 12 12 10 18 13 23 16 28 24 28 28 23 24 32 8 33 3 22Z" fill="#1664b0"/>
    <circle cx="12" cy="25" r="5" fill="#d6dde6"/><circle cx="12" cy="23.500" r="2" fill="#8894a6"/><path d="M8.500 28.500a3.500 3.500 0 0 1 7 0z" fill="#8894a6"/>
  </svg>
  <!-- mcafee -->
  <svg style="left:631px;top:11px" width="28" height="30" viewBox="0 0 28 30"><path d="M1 3L8 0.500 14 6 20 0.500 27 3V21L14 29.500 1 21Z" fill="#c8202c"/><path d="M6 8l8 6.500L22 8V19l-8 5.500L6 19z" fill="#d6d6d6"/><path d="M9.500 12.500L14 16.500l4.500-4V18L14 21l-4.500-3z" fill="#c8202c"/></svg>
  <!-- explorer -->
  <svg style="left:692px;top:12px" width="32" height="28" viewBox="0 0 32 28"><path d="M1 3.500Q1 2 2.500 2H11l2.500 3H29.500Q31 5 31 6.500V8H1Z" fill="#e2a93a"/><path d="M1 7H31V24.500Q31 26 29.500 26H2.500Q1 26 1 24.500Z" fill="#f7d672"/><path d="M6 26V17.500Q6 16 7.500 16H24.500Q26 16 26 17.500V26H21V20.500H11V26Z" fill="#4d9fdc"/></svg>
  <div class="abs" style="left:683px;top:47px;width:50px;height:3px;background:#3c7fc0"></div>
  <!-- store -->
  <svg style="left:755px;top:10px" width="30" height="31" viewBox="0 0 30 31"><path d="M9 8V5.500Q9 2 12.500 2H17.500Q21 2 21 5.500V8" stroke="#3c9be0" stroke-width="2" fill="none"/><path d="M1 7.500H29V25Q29 30 24 30H6Q1 30 1 25Z" fill="#1c5d9c"/><rect x="9.500" y="13" width="5" height="5" fill="#f25022"/><rect x="15.500" y="13" width="5" height="5" fill="#7fba00"/><rect x="9.500" y="19" width="5" height="5" fill="#00a4ef"/><rect x="15.500" y="19" width="5" height="5" fill="#ffb900"/></svg>
  <!-- blender active -->
  <div class="abs" style="left:802px;top:0;width:56px;height:50px;background:#ebebeb"></div>
  <div class="abs" style="left:858px;top:0;width:1px;height:50px;background:#c8c8c8"></div>
  <svg style="left:815px;top:14px" width="31" height="24" viewBox="0 0 21 15">
    <path d="M2.200 11.300L9.500 5.800H3.800C2.800 5.800 2.800 4.300 3.800 4.300H9.200L7.600 3C6.700 2.200 7.700 1.100 8.600 1.800L16.800 8.200C19.600 11 16.800 14.600 13 14.600 10 14.600 8.300 12.900 7.900 11.300L4.500 13.800C3.200 14.700 1 12.200 2.200 11.300Z" fill="#e9800f"/>
    <circle cx="13" cy="9.600" r="3.300" fill="#fff"/><circle cx="13" cy="9.600" r="2" fill="#265787"/>
  </svg>
  <div class="abs" style="left:802px;top:47px;width:60px;height:3px;background:#3c7fc0"></div>
  <!-- sticky notes -->
  <div class="abs" style="left:878px;top:10px;width:31px;height:30px;background:#fff"></div>
  <svg style="left:886px;top:17px" width="17" height="16" viewBox="0 0 17 16"><rect x="2" y="1" width="13" height="11" fill="#3b6fb5" transform="rotate(-8 8 8)"/><path d="M2 3H15V10L11.500 14H2Z" fill="#f6c32c"/><path d="M4.500 6H12.500M4.500 8.500H12.500M4.500 11H9.500" stroke="#8a6914" stroke-width="1"/></svg>
  <div class="abs" style="left:869px;top:47px;width:50px;height:3px;background:#3c7fc0"></div>
  <!-- premiere -->
  <div class="abs" style="left:942px;top:10.500px;width:28px;height:27px;background:#00005b;border-radius:5px"></div>
  <div class="t" style="left:945.500px;top:14.500px;font-size:18px;font-weight:bold;color:#9999ff;letter-spacing:-0.500px">Pr</div>
  <div class="abs" style="left:931px;top:47px;width:51px;height:3px;background:#3c7fc0"></div>
  <!-- photos -->
  <svg style="left:1003px;top:11px" width="30" height="28" viewBox="0 0 30 28"><rect width="30" height="28" rx="2" fill="#2f86d2"/><circle cx="21.500" cy="7" r="2.600" fill="#cfe6fa"/><path d="M0 22L11 9 22 22 30 28H0Z" fill="#1b4f94"/><path d="M13 28L24 15 30 21V26Q30 28 28 28Z" fill="#4a64c8"/></svg>
  <div class="abs" style="left:993px;top:47px;width:51px;height:3px;background:#3c7fc0"></div>
  <!-- chrome 1 -->
  <svg style="left:1064px;top:9px" width="36" height="36" viewBox="0 0 36 36"><circle cx="16" cy="16" r="15" fill="#e33b2e"/><path d="M16 16L3.200 8.200A15 15 0 0 0 16 31L22.500 19.800Z" fill="#2da94f"/><path d="M16 16L22.500 19.800 16 31A15 15 0 0 0 30.500 12H16Z" fill="#fcc31e"/><path d="M3.200 8.200A15 15 0 0 1 30.500 12H16Z" fill="#e33b2e"/><circle cx="16" cy="16" r="7" fill="#fff"/><circle cx="16" cy="16" r="5.500" fill="#4587f4"/><circle cx="24" cy="24.500" r="8.500" fill="#f05a1e"/><text x="24" y="28.500" font-family="Liberation Sans,sans-serif" font-size="11" font-weight="bold" text-anchor="middle" fill="#fff">E</text></svg>
  <div class="abs" style="left:1055px;top:47px;width:51px;height:3px;background:#3c7fc0"></div>
  <!-- chrome 2 -->
  <svg style="left:1126px;top:9px" width="36" height="36" viewBox="0 0 36 36"><circle cx="16" cy="16" r="15" fill="#e33b2e"/><path d="M16 16L3.200 8.200A15 15 0 0 0 16 31L22.500 19.800Z" fill="#2da94f"/><path d="M16 16L22.500 19.800 16 31A15 15 0 0 0 30.500 12H16Z" fill="#fcc31e"/><path d="M3.200 8.200A15 15 0 0 1 30.500 12H16Z" fill="#e33b2e"/><circle cx="16" cy="16" r="7" fill="#fff"/><circle cx="16" cy="16" r="5.500" fill="#4587f4"/><circle cx="24" cy="24.500" r="8.500" fill="#0a0a0a"/><text x="24" y="29" font-family="Liberation Sans,sans-serif" font-size="13" font-weight="bold" text-anchor="middle" fill="#fff">$</text></svg>
  <div class="abs" style="left:1117px;top:47px;width:51px;height:3px;background:#3c7fc0"></div>
  <!-- news / weather -->
  <svg style="left:1367px;top:14px" width="31" height="21" viewBox="0 0 31 21"><g fill="none" stroke="#111" stroke-width="1.800"><rect x="1" y="1.500" width="25.500" height="18" rx="2"/><path d="M26.500 5H30V17.500Q30 19.500 27 19.500"/><rect x="5" y="9" width="7" height="6"/><path d="M5 5.500H22.500M15 9.500H22.500M15 14.500H22.500"/></g></svg>
  <div class="t" style="left:1407.500px;top:16.500px;font-size:18.400px;color:#1a1a1a;letter-spacing:-0.500px">20°C</div>
  <div class="t" style="left:1456.500px;top:16.500px;font-size:18.400px;color:#1a1a1a;letter-spacing:-0.450px">Grotendeels b...</div>
  <!-- tray -->
  <svg style="left:1610px;top:14px" width="120" height="24" viewBox="0 0 120 24">
    <path d="M3 14.500L10 7.500 17 14.500" stroke="#111" stroke-width="1.400" fill="none"/>
    <rect x="32.500" y="7.500" width="16" height="9" fill="#111"/><path d="M49 10v4" stroke="#111" stroke-width="1.600"/><path d="M30 8v3.500M33 8v3.500M29.500 11.500h4v2l-2 2-2-2z" stroke="#111" stroke-width="1" fill="none"/>
    <g stroke="#111" stroke-width="1.200" fill="none"><rect x="64.500" y="7.500" width="8.500" height="9" rx="1.500"/><path d="M73.500 10.500L77 8.500V15.500L73.500 13.500M63 5.500A8 8 0 0 1 74 4M63 18.500A8 8 0 0 0 74 20"/></g>
    <g stroke="#111" stroke-width="1.200" fill="none"><path d="M90.500 9.500H93.500L97 6V18L93.500 14.500H90.500Z"/><path d="M100 9.500Q102 12 100 14.500M103 7.500Q106.500 12 103 16.500M106 5.500Q111 12 106 18.500"/></g>
  </svg>
  <div class="t" style="left:1733px;top:18px;font-size:15px;color:#1a1a1a;letter-spacing:-0.800px">ENG</div>
  <div class="t" style="left:1786px;top:5.500px;font-size:15px;color:#1a1a1a;letter-spacing:-0.200px">6:26 PM</div>
  <div class="t" style="left:1778px;top:29px;font-size:15px;color:#1a1a1a;letter-spacing:-0.150px">7/19/2023</div>
  <svg style="left:1866px;top:12px" width="36" height="34" viewBox="0 0 36 34"><path d="M3 3H23V18H9L3 23Z" fill="#111"/><path d="M6.500 7H19.500M6.500 10.500H19.500M6.500 14H15" stroke="#d6d6d6" stroke-width="1.200"/><circle cx="22.500" cy="22" r="9.500" fill="#d6d6d6" stroke="#555" stroke-width="1"/><text x="22.500" y="26.500" font-family="Liberation Sans,sans-serif" font-size="12.500" text-anchor="middle" fill="#111" letter-spacing="-0.500">15</text></svg>
  <div id="showdesk" class="abs" style="left:1914px;top:0;width:1px;height:50px;background:#8a8a8a"></div>
</div>
</body>
</html>
